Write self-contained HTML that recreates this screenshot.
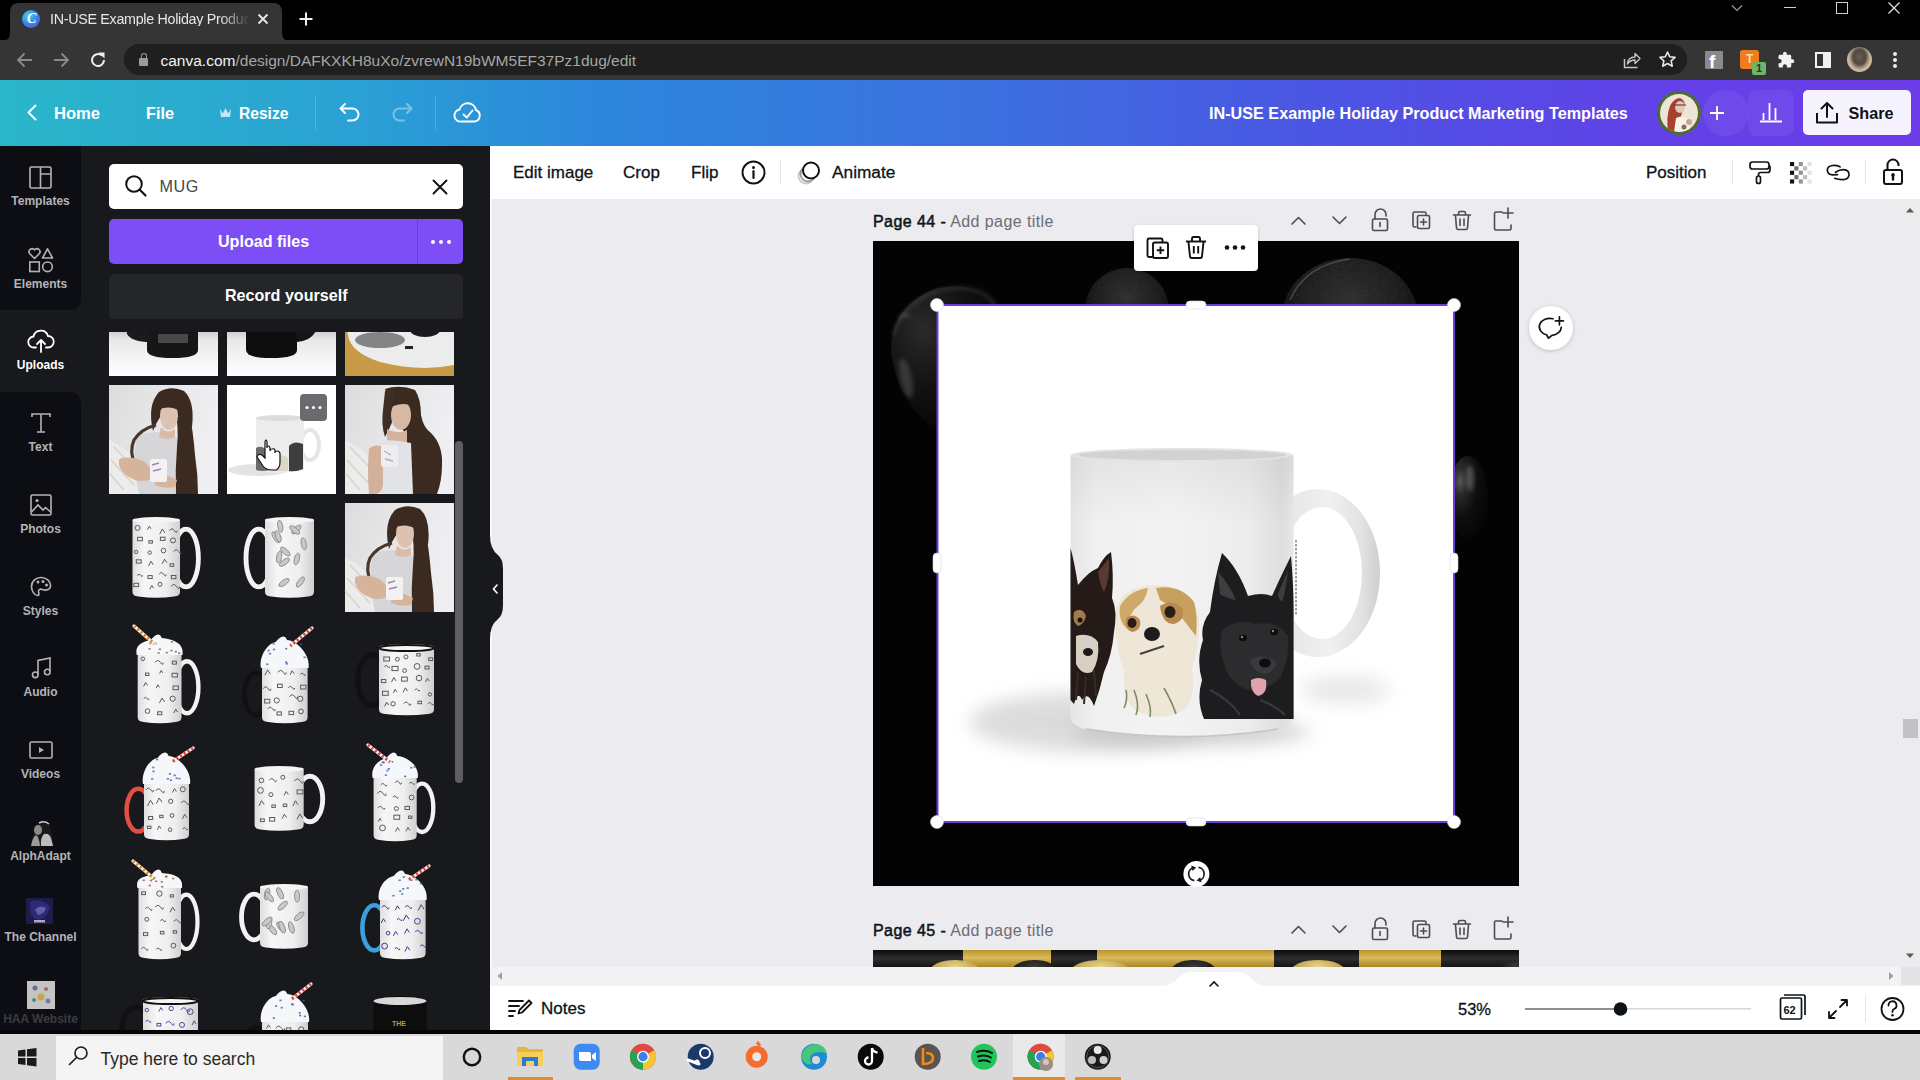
<!DOCTYPE html>
<html><head><meta charset="utf-8">
<style>
*{margin:0;padding:0;box-sizing:border-box}
html,body{width:1920px;height:1080px;overflow:hidden;background:#000;font-family:"Liberation Sans",sans-serif}
.a{position:absolute}
svg{position:absolute;overflow:visible}
.t{position:absolute;white-space:nowrap;line-height:1}
</style></head><body>
<!-- ============ CHROME ============ -->
<div class="a" style="left:0;top:0;width:1920px;height:40px;background:#000"></div>
<svg style="left:0;top:0" width="300" height="41" viewBox="0 0 300 41"><path d="M2 41Q10 41 10 33V12Q10 3 19 3H273Q282 3 282 12V33Q282 41 290 41Z" fill="#353535"/></svg>
<div class="a" style="left:0;top:40px;width:1920px;height:40px;background:#353535"></div>
<div class="a" style="left:124px;top:44px;width:1563px;height:31px;background:#1f1f1f;border-radius:16px"></div>


<!-- tab content -->
<div class="a" style="left:22px;top:10px;width:18px;height:18px;border-radius:50%;background:radial-gradient(circle at 35% 30%,#3fd0e6 0%,#3b7fe6 55%,#6c3ce9 100%)"></div>
<div class="t" style="left:27px;top:12px;font-size:14px;color:#fff;font-family:'Liberation Serif',serif;font-style:italic;font-weight:700">C</div>
<div class="t" style="left:50px;top:11.5px;font-size:14.3px;letter-spacing:-0.3px;color:#e6e6e6;width:200px;overflow:hidden;-webkit-mask-image:linear-gradient(90deg,#000 85%,transparent 100%)">IN-USE Example Holiday Product Marketing</div>
<svg style="left:257px;top:13px" width="12" height="12" viewBox="0 0 12 12"><path d="M1.5 1.5L10.5 10.5M10.5 1.5L1.5 10.5" stroke="#e8e8e8" stroke-width="1.8"/></svg>
<svg style="left:299px;top:12px" width="14" height="14" viewBox="0 0 14 14"><path d="M7 0.5V13.5M0.5 7H13.5" stroke="#f0f0f0" stroke-width="2"/></svg>
<!-- window controls -->
<svg style="left:1731px;top:4px" width="12" height="8" viewBox="0 0 12 8"><path d="M1 1.5L6 6.5L11 1.5" stroke="#9a9a9a" stroke-width="1.2" fill="none"/></svg>
<div class="a" style="left:1784px;top:7px;width:12px;height:1px;background:#cfcfcf"></div>
<div class="a" style="left:1836px;top:2px;width:12px;height:12px;border:1.2px solid #cfcfcf"></div>
<svg style="left:1888px;top:2px" width="12" height="12" viewBox="0 0 12 12"><path d="M0.5 0.5L11.5 11.5M11.5 0.5L0.5 11.5" stroke="#dcdcdc" stroke-width="1.3"/></svg>
<!-- nav -->
<svg style="left:16px;top:52px" width="17" height="16" viewBox="0 0 17 16"><path d="M16 8H2M8.5 1.5L2 8L8.5 14.5" stroke="#8a8a8a" stroke-width="1.8" fill="none"/></svg>
<svg style="left:53px;top:52px" width="17" height="16" viewBox="0 0 17 16"><path d="M1 8H15M8.5 1.5L15 8L8.5 14.5" stroke="#8a8a8a" stroke-width="1.8" fill="none"/></svg>
<svg style="left:89px;top:51px" width="18" height="18" viewBox="0 0 18 18"><path d="M15 9A6 6 0 1 1 12.8 4.4" stroke="#efefef" stroke-width="2" fill="none"/><path d="M9.5 1.5H15.5V7.5Z" fill="#efefef"/></svg>
<div class="a" style="left:139px;top:58px;width:9px;height:8px;background:#9a9a9a;border-radius:1px"></div>
<div class="a" style="left:140.5px;top:53px;width:6px;height:7px;border:1.6px solid #9a9a9a;border-bottom:none;border-radius:3px 3px 0 0"></div>
<div class="t" style="left:160.5px;top:53px;font-size:15.5px;color:#f2f2f2">canva.com<span style="color:#a6a6a6">/design/DAFKXKH8uXo/zvrewN19bWM5EF37Pz1dug/edit</span></div>
<!-- right toolbar icons -->
<svg style="left:1623px;top:51px" width="18" height="18" viewBox="0 0 18 18"><path d="M1.5 8V16.5H14.5" stroke="#c4c4c4" stroke-width="1.5" fill="none"/><path d="M4.5 13C5 8 8.5 6 12 6V2.5L17 7.5L12 12.5V9C9 9 6.5 10 4.5 13Z" stroke="#c4c4c4" stroke-width="1.4" fill="none" stroke-linejoin="round"/></svg>
<svg style="left:1658px;top:50px" width="19" height="19" viewBox="0 0 24 24"><path d="M12 2.5L14.9 8.6L21.5 9.3L16.6 13.8L18 20.5L12 17.1L6 20.5L7.4 13.8L2.5 9.3L9.1 8.6Z" stroke="#e6e6e6" stroke-width="2" fill="none" stroke-linejoin="round"/></svg>
<div class="a" style="left:1705px;top:51px;width:18px;height:18px;background:#8a8a8a;border-radius:1px"></div>
<div class="t" style="left:1709px;top:52px;font-size:19px;font-weight:700;color:#fff">f</div>
<div class="a" style="left:1740px;top:50px;width:19px;height:19px;background:#f07c1c;border-radius:3px"></div>
<div class="t" style="left:1746px;top:53px;font-size:12px;font-weight:700;color:#ffd9a8">T</div>
<div class="a" style="left:1752px;top:62px;width:14px;height:13px;background:#6fb46a;border-radius:2px"></div>
<div class="t" style="left:1756px;top:63px;font-size:11px;font-weight:700;color:#1f3f1c">1</div>
<svg style="left:1777px;top:51px" width="18" height="18" viewBox="0 0 24 24"><path d="M20.5 11H19V7c0-1.1-.9-2-2-2h-4V3.5a2.5 2.5 0 0 0-5 0V5H4c-1.1 0-2 .9-2 2v3.8h1.5c1.5 0 2.7 1.2 2.7 2.7S5 16.2 3.5 16.2H2V20c0 1.1.9 2 2 2h3.8v-1.5c0-1.5 1.2-2.7 2.7-2.7s2.7 1.2 2.7 2.7V22H17c1.1 0 2-.9 2-2v-4h1.5a2.5 2.5 0 0 0 0-5z" fill="#f2f2f2"/></svg>
<div class="a" style="left:1815px;top:52px;width:16px;height:16px;border:2px solid #f2f2f2;border-right-width:8px"></div>
<div class="a" style="left:1847px;top:47px;width:25px;height:25px;border-radius:50%;background:radial-gradient(ellipse at 50% 40%,#6a5d55 0%,#514841 35%,#c9b49a 60%,#d9c8b2 100%)"></div>
<div class="a" style="left:1893px;top:52px;width:4px;height:4px;border-radius:50%;background:#eee;box-shadow:0 6px 0 #eee,0 12px 0 #eee"></div>

<!-- ============ CANVA HEADER ============ -->
<div class="a" style="left:0;top:80px;width:1920px;height:66px;background:linear-gradient(90deg,#2bb6c9 0%,#2aa2d4 18%,#2c87dc 31%,#3b72df 50%,#4a56e3 68%,#6141e8 86%,#6e3ce9 100%)"></div>


<svg style="left:26px;top:104px" width="12" height="17" viewBox="0 0 12 17"><path d="M9.5 1.5L2.5 8.5L9.5 15.5" stroke="#fff" stroke-width="2" fill="none" stroke-linecap="round" stroke-linejoin="round"/></svg>
<div class="t" style="left:54px;top:105.5px;font-size:16.6px;font-weight:700;color:#fff">Home</div>
<div class="t" style="left:146px;top:105px;font-size:16.2px;font-weight:700;color:#fff">File</div>
<svg style="left:219px;top:107px" width="13" height="12" viewBox="0 0 13 12"><path d="M1 2L3.8 6.5L6.5 1L9.2 6.5L12 2L11 10H2Z" fill="#e4f0ff" opacity="0.85"/></svg>
<div class="t" style="left:239px;top:105.5px;font-size:15.6px;font-weight:700;color:#fff">Resize</div>
<div class="a" style="left:315px;top:96px;width:1px;height:34px;background:rgba(255,255,255,0.18)"></div>
<svg style="left:338px;top:102px" width="24" height="20" viewBox="0 0 24 20"><path d="M7 2L2.5 6.5L7 11" stroke="#fff" stroke-width="1.9" fill="none" stroke-linecap="round" stroke-linejoin="round"/><path d="M3 6.5H14.5A6 6 0 0 1 14.5 18.5H10" stroke="#fff" stroke-width="1.9" fill="none" stroke-linecap="round"/></svg>
<svg style="left:390px;top:102px" width="24" height="20" viewBox="0 0 24 20" opacity="0.38"><path d="M17 2L21.5 6.5L17 11" stroke="#fff" stroke-width="1.9" fill="none" stroke-linecap="round" stroke-linejoin="round"/><path d="M21 6.5H9.5A6 6 0 0 0 9.5 18.5H14" stroke="#fff" stroke-width="1.9" fill="none" stroke-linecap="round"/></svg>
<div class="a" style="left:435px;top:96px;width:1px;height:34px;background:rgba(255,255,255,0.18)"></div>
<svg style="left:454px;top:101px" width="28" height="22" viewBox="0 0 28 22"><path d="M7.5 20.5H20.5A6 6 0 0 0 22 9A8.5 8.5 0 0 0 5.5 8.5A6 6 0 0 0 7.5 20.5Z" stroke="#fff" stroke-width="1.9" fill="none" stroke-linejoin="round"/><path d="M9.5 13.5L12.8 16.5L18.5 9.5" stroke="#fff" stroke-width="1.9" fill="none" stroke-linecap="round" stroke-linejoin="round"/></svg>
<div class="t" style="left:1209px;top:105px;font-size:16.2px;font-weight:700;color:#fff">IN-USE Example Holiday Product Marketing Templates</div>
<div class="a" style="left:1657px;top:91px;width:44px;height:44px;border-radius:50%;background:#4c6b2e"></div>
<svg style="left:1660px;top:94px" width="38" height="38" viewBox="0 0 38 38"><defs><clipPath id="avc"><circle cx="19" cy="19" r="19"/></clipPath></defs><g clip-path="url(#avc)"><rect width="38" height="38" fill="#ece4d6"/><path d="M8 38Q6 22 10 12Q14 4 20 4Q26 6 24 14Q20 22 18 38Z" fill="#a8402e"/><ellipse cx="20" cy="13" rx="5" ry="6" fill="#e2c8b4"/><path d="M14 11H26" stroke="#333" stroke-width="1.2"/><path d="M16 24Q22 20 30 26V38H14Z" fill="#f6f2ea"/><circle cx="29" cy="28" r="3" fill="#c9a890"/><circle cx="24" cy="33" r="2.5" fill="#8a6a5a"/></g></svg>
<div class="a" style="left:1703px;top:90px;width:46px;height:46px;border-radius:50%;background:rgba(255,255,255,0.06)"></div>
<svg style="left:1709px;top:105px" width="16" height="16" viewBox="0 0 16 16"><path d="M8 1V15M1 8H15" stroke="#fff" stroke-width="1.8"/></svg>
<div class="a" style="left:1748px;top:90px;width:46px;height:46px;border-radius:8px;background:rgba(255,255,255,0.06)"></div>
<svg style="left:1759px;top:101px" width="24" height="22" viewBox="0 0 24 22"><path d="M1 20.5H23M4.5 19V12M10.5 19V2M16.5 19V7" stroke="#fff" stroke-width="1.8" fill="none"/></svg>
<div class="a" style="left:1803px;top:90px;width:108px;height:45px;border-radius:5px;background:#f6f3fe"></div>
<svg style="left:1815px;top:101px" width="24" height="24" viewBox="0 0 24 24"><path d="M2 12V21.5H22V12" stroke="#0e1318" stroke-width="2" fill="none" stroke-linejoin="round"/><path d="M12 16V2.5M6.5 7.5L12 2L17.5 7.5" stroke="#0e1318" stroke-width="2" fill="none" stroke-linecap="round" stroke-linejoin="round"/></svg>
<div class="t" style="left:1848.5px;top:105px;font-size:16.2px;font-weight:700;color:#0e1318">Share</div>

<!-- ============ LEFT RAIL + PANEL ============ -->
<div class="a" style="left:0;top:146px;width:490px;height:884px;background:#18191d"></div>
<div class="a" style="left:0;top:146px;width:81px;height:164px;background:#0d0e13;border-radius:0 0 10px 0"></div>
<div class="a" style="left:0;top:392px;width:81px;height:638px;background:#0d0e13;border-radius:0 10px 0 0"></div>
<style>.rl{position:absolute;left:0;width:81px;text-align:center;font-size:12px;font-weight:700;color:#b4b4b8;line-height:1;white-space:nowrap}</style>
<svg style="left:29px;top:166px" width="23" height="23" viewBox="0 0 23 23"><rect x="1" y="1" width="21" height="21" rx="1.5" stroke="#b4b4b8" stroke-width="1.6" fill="none"/><path d="M11.5 1V22M11.5 8H22" stroke="#b4b4b8" stroke-width="1.6"/></svg>
<div class="rl" style="top:195px">Templates</div>
<svg style="left:28px;top:247px" width="26" height="26" viewBox="0 0 26 26"><path d="M6.5 11.5L1.8 6.8A2.8 2.8 0 0 1 6.5 2.8A2.8 2.8 0 0 1 11.2 6.8Z" stroke="#b4b4b8" stroke-width="1.6" fill="none" stroke-linejoin="round"/><path d="M19.5 1.8L24.5 11H14.5Z" stroke="#b4b4b8" stroke-width="1.6" fill="none" stroke-linejoin="round"/><rect x="1.8" y="15" width="9.5" height="9.5" stroke="#b4b4b8" stroke-width="1.6" fill="none"/><circle cx="19.5" cy="19.8" r="4.8" stroke="#b4b4b8" stroke-width="1.6" fill="none"/></svg>
<div class="rl" style="top:278px">Elements</div>
<svg style="left:27px;top:329px" width="28" height="24" viewBox="0 0 28 24"><path d="M9 18.5H7A5.5 5.5 0 0 1 6.5 7.5A7.5 7.5 0 0 1 21 7A5.5 5.5 0 0 1 21 18.5H19" stroke="#fff" stroke-width="1.8" fill="none" stroke-linecap="round"/><path d="M14 23V11.5M10 15L14 11L18 15" stroke="#fff" stroke-width="1.8" fill="none" stroke-linecap="round" stroke-linejoin="round"/></svg>
<div class="rl" style="top:359px;color:#fff">Uploads</div>
<svg style="left:31px;top:413px" width="20" height="20" viewBox="0 0 20 20"><path d="M1 4V1H19V4M10 1V19M6 19H14" stroke="#b4b4b8" stroke-width="1.6" fill="none"/></svg>
<div class="rl" style="top:441px">Text</div>
<svg style="left:30px;top:494px" width="22" height="22" viewBox="0 0 22 22"><rect x="1" y="1" width="20" height="20" rx="1.5" stroke="#b4b4b8" stroke-width="1.6" fill="none"/><circle cx="7" cy="6.5" r="1.6" fill="#b4b4b8"/><path d="M1.5 18L8 11L13 16L15.5 13.5L20.5 18" stroke="#b4b4b8" stroke-width="1.6" fill="none"/></svg>
<div class="rl" style="top:523px">Photos</div>
<svg style="left:30px;top:576px" width="22" height="21" viewBox="0 0 22 21"><path d="M11 1.5C5.5 1.5 1.5 5.5 1.5 10.5C1.5 15.5 5 19.5 7.5 19.5C9.5 19.5 9 17.5 8.5 16C8 14 10 12.5 12.5 13.5C16.5 15 20.5 13.5 20.5 9.5C20.5 5 16.5 1.5 11 1.5Z" stroke="#b4b4b8" stroke-width="1.6" fill="none"/><circle cx="8" cy="6" r="1.5" fill="#b4b4b8"/><circle cx="13" cy="5.5" r="1.5" fill="#b4b4b8"/><circle cx="16.5" cy="9" r="1.5" fill="#b4b4b8"/></svg>
<div class="rl" style="top:605px">Styles</div>
<svg style="left:31px;top:657px" width="21" height="22" viewBox="0 0 21 22"><path d="M7 17.5V3.5L19 1V14.5" stroke="#b4b4b8" stroke-width="1.6" fill="none"/><circle cx="4.3" cy="17.8" r="2.8" stroke="#b4b4b8" stroke-width="1.6" fill="none"/><circle cx="16.3" cy="15" r="2.8" stroke="#b4b4b8" stroke-width="1.6" fill="none"/></svg>
<div class="rl" style="top:686px">Audio</div>
<svg style="left:29px;top:741px" width="24" height="18" viewBox="0 0 24 18"><rect x="1" y="1" width="22" height="16" rx="1.5" stroke="#b4b4b8" stroke-width="1.6" fill="none"/><path d="M10 6V12L15 9Z" fill="#b4b4b8"/></svg>
<div class="rl" style="top:768px">Videos</div>
<svg style="left:27px;top:820px" width="28" height="26" viewBox="0 0 28 26"><path d="M6 26Q4 16 8 10Q10 3 16 2Q23 2 24 9Q26 16 27 26Z" fill="#1a1a1a"/><path d="M14 26Q13 18 17 14Q22 13 24 18L26 26Z" fill="#bdbdbd"/><path d="M4 26Q5 18 9 15Q12 16 13 26Z" fill="#9a9a9a"/><ellipse cx="11" cy="10" rx="4" ry="5" fill="#8a8a8a"/><path d="M12 3Q18 0 22 4" stroke="#cfcfcf" stroke-width="1.5" fill="none"/></svg>
<div class="rl" style="top:850px">AlphAdapt</div>
<svg style="left:26px;top:898px" width="27" height="28" viewBox="0 0 27 28"><path d="M0 0H27V26H0Z" fill="#1e1c48"/><path d="M4 4Q14 -1 24 8Q22 20 12 22Q3 20 4 4Z" fill="#2e2a7a"/><path d="M9 12Q14 6 20 10Q18 16 12 17Z" fill="#7a76b0" opacity="0.7"/><rect x="8" y="22" width="11" height="2.5" fill="#a9a9c0"/></svg>
<div class="rl" style="top:931px">The Channel</div>
<svg style="left:27px;top:981px" width="28" height="28" viewBox="0 0 28 28"><rect width="28" height="28" fill="#c4c4c2"/><circle cx="8" cy="7" r="2.5" fill="#6a6aa0"/><circle cx="19" cy="8" r="2" fill="#a06a6a"/><circle cx="14" cy="16" r="3.5" fill="#c9a64a"/><circle cx="7" cy="19" r="2" fill="#5a8a6a"/><circle cx="21" cy="20" r="2.5" fill="#7a7ab0"/></svg>
<div class="rl" style="top:1013px;color:#3c3c40">HAA Website</div>


<!-- panel -->
<div class="a" style="left:109px;top:164px;width:354px;height:45px;background:#fff;border-radius:5px"></div>
<svg style="left:124px;top:174px" width="24" height="24" viewBox="0 0 24 24"><circle cx="10" cy="10" r="7.8" stroke="#0e1318" stroke-width="2" fill="none"/><path d="M15.8 15.8L21.5 21.5" stroke="#0e1318" stroke-width="2.2" stroke-linecap="round"/></svg>
<div class="t" style="left:159.5px;top:178px;font-size:16.2px;color:#45474d;letter-spacing:0.5px">MUG</div>
<svg style="left:432px;top:179px" width="16" height="16" viewBox="0 0 16 16"><path d="M1.5 1.5L14.5 14.5M14.5 1.5L1.5 14.5" stroke="#0e1318" stroke-width="1.9" stroke-linecap="round"/></svg>
<div class="a" style="left:109px;top:219px;width:354px;height:45px;background:#7d4ef6;border-radius:5px"></div>
<div class="a" style="left:417px;top:219px;width:1px;height:45px;background:#6a3fd6"></div>
<div class="t" style="left:218px;top:233px;font-size:16.1px;font-weight:700;color:#fff">Upload files</div>
<div class="a" style="left:431px;top:240px;width:4px;height:4px;border-radius:50%;background:#fff;box-shadow:8px 0 0 #fff,16px 0 0 #fff"></div>
<div class="a" style="left:109px;top:274px;width:354px;height:45px;background:#252629;border-radius:5px"></div>
<div class="t" style="left:225px;top:287px;font-size:16.1px;font-weight:700;color:#fff">Record yourself</div>

<!--PANEL_START-->
<svg style="left:0;top:0" width="490" height="1030" viewBox="0 0 490 1030">
<defs><clipPath id="pclip"><rect x="100" y="332" width="370" height="698"/></clipPath><linearGradient id="wbg" x1="0" y1="0" x2="0" y2="1"><stop offset="0" stop-color="#a9a9a9"/><stop offset="0.35" stop-color="#e8e8e8"/><stop offset="1" stop-color="#ffffff"/></linearGradient><linearGradient id="pbg" x1="0" y1="0" x2="1" y2="0.3"><stop offset="0" stop-color="#dcdcdc"/><stop offset="0.45" stop-color="#e6e6e8"/><stop offset="1" stop-color="#efeff1"/></linearGradient><linearGradient id="hair" x1="0" y1="0" x2="0" y2="1"><stop offset="0" stop-color="#2a1a12"/><stop offset="1" stop-color="#4a3022"/></linearGradient></defs>
<g clip-path="url(#pclip)">
<rect x="109" y="320" width="109" height="56" fill="url(#wbg)"/>
<path d="M147 320H198V350Q198 358 172.5 358Q147 358 147 350Z" fill="#161616"/><path d="M126 320H150V342Q132 342 127 334Z" fill="#1a1a1a"/><rect x="158" y="334" width="30" height="9" fill="#6a6a6a" opacity="0.6"/>
<rect x="227" y="320" width="109" height="56" fill="url(#wbg)"/>
<path d="M246 320H297V350Q297 358 271.5 358Q246 358 246 350Z" fill="#0e0e0e"/><path d="M295 320H318Q318 340 297 342Z" fill="#151515"/>
<rect x="345" y="320" width="109" height="56" fill="#c89a45"/>
<path d="M345 320H454V365Q420 372 380 362Q350 352 348 335Z" fill="#ececec"/>
<ellipse cx="380" cy="340" rx="25" ry="8" fill="#6a6a6a" opacity="0.8"/><ellipse cx="425" cy="330" rx="15" ry="7" fill="#1a1a1a"/><rect x="405" y="346" width="8" height="3" fill="#222"/>
<g transform="translate(109 385)">
<rect x="0" y="0" width="109" height="109" fill="url(#pbg)"/>
<path d="M0 55Q15 60 30 80L40 109H0Z" fill="#ececea" opacity="0.9"/><path d="M2 75L25 100M0 88L15 105M5 62L32 90" stroke="#c9c9c6" stroke-width="1.5" opacity="0.7"/>
<path d="M28 50Q45 45 62 48Q70 52 70 62V109H30Q22 80 28 50Z" fill="#d6d6d9"/>
<path d="M52 42Q58 50 66 44L66 52Q58 56 50 52Z" fill="#d9bba6"/>
<path d="M44 46Q38 20 50 7Q62 0 75 6Q86 16 83 42Q70 30 60 24Q50 30 44 46Z" fill="#3b2a20"/>
<path d="M62 18Q74 14 80 26Q84 45 86 70Q89 90 89 109H67Q66 85 68 62Q70 40 66 26Z" fill="#3b2a20"/>
<ellipse cx="60" cy="31" rx="9" ry="14" fill="#dcc2b0"/>
<path d="M50 22Q58 12 68 16Q72 20 71 26Q62 20 50 24Z" fill="#3b2a20"/>
<path d="M47 40Q32 44 25 55Q20 66 26 80" stroke="#4a382c" stroke-width="3.2" fill="none"/>
<path d="M10 74Q22 70 36 77L46 88Q44 97 30 96Q14 92 10 80Z" fill="#d6b49c"/>
<path d="M46 92Q56 88 68 95L66 102Q55 104 46 100Z" fill="#d6b49c"/>
<rect x="41" y="74" width="17" height="23" rx="2" fill="#f2f2f5"/><path d="M43 80L50 78M44 86L52 84" stroke="#9a8aa8" stroke-width="1.5"/>
</g>
<rect x="227" y="385" width="109" height="109" fill="#ffffff"/>
<ellipse cx="258" cy="470" rx="30" ry="6" fill="#d0d0d0" opacity="0.6"/>
<ellipse cx="310" cy="445" rx="9" ry="15" fill="none" stroke="#e6e6e6" stroke-width="4"/>
<path d="M256 418Q280 414 304 418V470Q280 476 256 470Z" fill="#ececec"/>
<ellipse cx="280" cy="418" rx="24" ry="3" fill="#dcdcdc"/>
<path d="M256 448Q262 444 268 452L270 470Q262 472 256 470Z" fill="#6a6a6a"/><path d="M289 446Q294 440 303 444V469Q296 472 289 471Z" fill="#3e3e40"/><path d="M270 456Q278 452 288 458V471L270 471Z" fill="#ddd6c8"/>
<rect x="300" y="394" width="27" height="27" rx="4" fill="#6b6b6f"/>
<circle cx="307" cy="407.5" r="1.6" fill="#fff"/><circle cx="313.5" cy="407.5" r="1.6" fill="#fff"/><circle cx="320" cy="407.5" r="1.6" fill="#fff"/>
<path d="M265 443V458L262 455Q258 453 257 457L263 466Q266 470 272 470H276Q280 468 280 462V454Q280 451 277 451Q275 451 275 453V451Q275 448 272 449Q270 449 270 451V449Q270 446 268 446Q267 446 267 448V443Q267 440 266 440Q265 440 265 443Z" fill="#fff" stroke="#111" stroke-width="1.2"/>
<g transform="translate(345 385)">
<rect x="0" y="0" width="109" height="109" fill="url(#pbg)"/>
<path d="M0 55Q15 60 30 80L40 109H0Z" fill="#ececea" opacity="0.9"/><path d="M2 75L25 100M0 88L15 105M5 62L32 90" stroke="#c9c9c6" stroke-width="1.5" opacity="0.7"/>
<path d="M40 4Q55 -1 70 5Q76 14 76 30Q78 42 86 48Q98 60 97 80Q97 96 92 109H62Q62 80 62 60Q60 45 55 40Z" fill="#3b2a20"/>
<path d="M40 6Q44 3 50 3L48 35Q44 45 40 52Q36 40 38 25Z" fill="#3f2e23"/>
<path d="M42 44Q52 50 62 45L62 58H42Z" fill="#d4b29c"/>
<path d="M34 56Q48 54 66 58L68 109H36Q32 80 34 56Z" fill="#e2e3e6"/>
<ellipse cx="56" cy="30" rx="10" ry="15" fill="#d6b8a4"/>
<path d="M46 20Q52 8 62 10Q68 14 68 22Q60 16 46 22Z" fill="#3b2a20"/>
<path d="M24 64Q30 58 38 62L38 100Q36 109 30 109H24Q22 85 24 64Z" fill="#d3b09a"/>
<rect x="36" y="60" width="17" height="22" rx="2" fill="#eeeef2"/><path d="M39 66L46 70M40 74L48 76" stroke="#b0b0c0" stroke-width="1.4"/>
</g>
<ellipse cx="186.0" cy="558.0" rx="12.4" ry="28.9" fill="none" stroke="#f2f2f2" stroke-width="4.8"/>
<linearGradient id="g46" x1="0" x2="1"><stop offset="0" stop-color="#dedede"/><stop offset="0.25" stop-color="#f6f6f6"/><stop offset="0.7" stop-color="#efefef"/><stop offset="1" stop-color="#cfcfcf"/></linearGradient>
<path d="M132.5 520H180V592Q180 596 174 596.5Q156.25 599 138.5 596.5Q132.5 596 132.5 592Z" fill="url(#g46)"/>
<ellipse cx="156.25" cy="520" rx="23.75" ry="3" fill="#f4f4f4"/>
<circle cx="137.6" cy="527.9" r="2.5" fill="none" stroke="#5a5a5a" stroke-width="1.0"/>
<rect x="137.6" y="537.3" width="4.8" height="3.4" fill="none" stroke="#5a5a5a" stroke-width="1.0"/>
<circle cx="136.1" cy="552.0" r="1.7" fill="none" stroke="#5a5a5a" stroke-width="1.0"/>
<rect x="136.3" y="559.8" width="4.8" height="3.3" fill="none" stroke="#5a5a5a" stroke-width="1.0"/>
<path d="M137.4 575.4Q139.1 572.9 140.8 575.4T142.5 575.4" fill="none" stroke="#5a5a5a" stroke-width="1.0"/>
<rect x="133.8" y="583.3" width="4.8" height="3.3" fill="none" stroke="#5a5a5a" stroke-width="1.0"/>
<path d="M147.5 529.7L149.3 526.1L151.0 528.8" fill="none" stroke="#5a5a5a" stroke-width="1.0"/>
<rect x="148.9" y="540.7" width="3.5" height="2.4" fill="none" stroke="#5a5a5a" stroke-width="1.0"/>
<circle cx="149.7" cy="552.6" r="1.7" fill="none" stroke="#5a5a5a" stroke-width="1.0"/>
<path d="M148.6 566.0L150.9 561.3L153.3 564.8" fill="none" stroke="#5a5a5a" stroke-width="1.0"/>
<rect x="148.0" y="575.6" width="4.2" height="2.9" fill="none" stroke="#5a5a5a" stroke-width="1.0"/>
<path d="M149.8 589.3L151.8 585.4L153.7 588.3" fill="none" stroke="#5a5a5a" stroke-width="1.0"/>
<path d="M159.7 534.2L162.3 528.9L164.9 532.9" fill="none" stroke="#5a5a5a" stroke-width="1.0"/>
<rect x="160.4" y="537.2" width="4.6" height="3.2" fill="none" stroke="#5a5a5a" stroke-width="1.0"/>
<circle cx="163.5" cy="550.6" r="2.3" fill="none" stroke="#5a5a5a" stroke-width="1.0"/>
<path d="M162.1 563.9L164.5 559.2L166.9 562.7" fill="none" stroke="#5a5a5a" stroke-width="1.0"/>
<path d="M159.1 574.3Q161.4 570.8 163.7 574.3T166.0 574.3" fill="none" stroke="#5a5a5a" stroke-width="1.0"/>
<circle cx="160.0" cy="584.3" r="2.0" fill="none" stroke="#5a5a5a" stroke-width="1.0"/>
<path d="M169.4 530.7Q171.9 526.9 174.4 530.7T176.9 530.7" fill="none" stroke="#5a5a5a" stroke-width="1.0"/>
<circle cx="173.0" cy="540.4" r="2.5" fill="none" stroke="#5a5a5a" stroke-width="1.0"/>
<path d="M173.8 551.6Q176.3 547.9 178.7 551.6T181.2 551.6" fill="none" stroke="#5a5a5a" stroke-width="1.0"/>
<rect x="170.1" y="563.8" width="3.6" height="2.5" fill="none" stroke="#5a5a5a" stroke-width="1.0"/>
<rect x="171.3" y="575.5" width="4.6" height="3.2" fill="none" stroke="#5a5a5a" stroke-width="1.0"/>
<path d="M171.0 586.6Q173.8 582.3 176.6 586.6T179.5 586.6" fill="none" stroke="#5a5a5a" stroke-width="1.0"/>
<ellipse cx="258.8" cy="558.0" rx="12.8" ry="28.9" fill="none" stroke="#f2f2f2" stroke-width="4.9"/>
<linearGradient id="g74" x1="0" x2="1"><stop offset="0" stop-color="#dedede"/><stop offset="0.25" stop-color="#f6f6f6"/><stop offset="0.7" stop-color="#efefef"/><stop offset="1" stop-color="#cfcfcf"/></linearGradient>
<path d="M265 520H314V592Q314 596 308 596.5Q289.5 599 271 596.5Q265 596 265 592Z" fill="url(#g74)"/>
<ellipse cx="289.5" cy="520" rx="24.5" ry="3" fill="#f4f4f4"/>
<ellipse cx="303.7" cy="543.8" rx="2.5" ry="6" fill="#c8c8c8" stroke="#8a8a8a" stroke-width="0.9" transform="rotate(-10 303.7 543.8)"/>
<ellipse cx="284.0" cy="582.6" rx="2.5" ry="6" fill="#c8c8c8" stroke="#8a8a8a" stroke-width="0.9" transform="rotate(55 284.0 582.6)"/>
<ellipse cx="275.9" cy="537.3" rx="2.5" ry="6" fill="#c8c8c8" stroke="#8a8a8a" stroke-width="0.9" transform="rotate(-32 275.9 537.3)"/>
<ellipse cx="279.1" cy="557.0" rx="2.5" ry="6" fill="#c8c8c8" stroke="#8a8a8a" stroke-width="0.9" transform="rotate(11 279.1 557.0)"/>
<ellipse cx="280.2" cy="526.3" rx="2.5" ry="6" fill="#c8c8c8" stroke="#8a8a8a" stroke-width="0.9" transform="rotate(-10 280.2 526.3)"/>
<ellipse cx="284.4" cy="562.2" rx="2.5" ry="6" fill="#c8c8c8" stroke="#8a8a8a" stroke-width="0.9" transform="rotate(54 284.4 562.2)"/>
<ellipse cx="296.9" cy="559.0" rx="2.5" ry="6" fill="#c8c8c8" stroke="#8a8a8a" stroke-width="0.9" transform="rotate(14 296.9 559.0)"/>
<ellipse cx="296.4" cy="529.5" rx="2.5" ry="6" fill="#c8c8c8" stroke="#8a8a8a" stroke-width="0.9" transform="rotate(48 296.4 529.5)"/>
<ellipse cx="300.4" cy="582.0" rx="2.5" ry="6" fill="#c8c8c8" stroke="#8a8a8a" stroke-width="0.9" transform="rotate(36 300.4 582.0)"/>
<ellipse cx="285.3" cy="551.5" rx="2.5" ry="6" fill="#c8c8c8" stroke="#8a8a8a" stroke-width="0.9" transform="rotate(-48 285.3 551.5)"/>
<ellipse cx="294.7" cy="530.0" rx="2.5" ry="6" fill="#c8c8c8" stroke="#8a8a8a" stroke-width="0.9" transform="rotate(-52 294.7 530.0)"/>
<ellipse cx="278.1" cy="536.4" rx="2.5" ry="6" fill="#c8c8c8" stroke="#8a8a8a" stroke-width="0.9" transform="rotate(-19 278.1 536.4)"/>
<g transform="translate(345 503)">
<rect x="0" y="0" width="109" height="109" fill="url(#pbg)"/>
<path d="M0 55Q15 60 30 80L40 109H0Z" fill="#ececea" opacity="0.9"/><path d="M2 75L25 100M0 88L15 105M5 62L32 90" stroke="#c9c9c6" stroke-width="1.5" opacity="0.7"/>
<path d="M28 50Q45 45 62 48Q70 52 70 62V109H30Q22 80 28 50Z" fill="#d6d6d9"/>
<path d="M52 42Q58 50 66 44L66 52Q58 56 50 52Z" fill="#d9bba6"/>
<path d="M44 46Q38 20 50 7Q62 0 75 6Q86 16 83 42Q70 30 60 24Q50 30 44 46Z" fill="#3b2a20"/>
<path d="M62 18Q74 14 80 26Q84 45 86 70Q89 90 89 109H67Q66 85 68 62Q70 40 66 26Z" fill="#3b2a20"/>
<ellipse cx="60" cy="31" rx="9" ry="14" fill="#dcc2b0"/>
<path d="M50 22Q58 12 68 16Q72 20 71 26Q62 20 50 24Z" fill="#3b2a20"/>
<path d="M47 40Q32 44 25 55Q20 66 26 80" stroke="#4a382c" stroke-width="3.2" fill="none"/>
<path d="M10 74Q22 70 36 77L46 88Q44 97 30 96Q14 92 10 80Z" fill="#d6b49c"/>
<path d="M46 92Q56 88 68 95L66 102Q55 104 46 100Z" fill="#d6b49c"/>
<rect x="41" y="74" width="17" height="23" rx="2" fill="#f2f2f5"/><path d="M43 80L50 78M44 86L52 84" stroke="#9a8aa8" stroke-width="1.5"/>
</g>
<ellipse cx="187.0" cy="687.2" rx="11.4" ry="26.0" fill="none" stroke="#f2f2f2" stroke-width="4.4"/>
<linearGradient id="g104" x1="0" x2="1"><stop offset="0" stop-color="#dedede"/><stop offset="0.25" stop-color="#f6f6f6"/><stop offset="0.7" stop-color="#efefef"/><stop offset="1" stop-color="#cfcfcf"/></linearGradient>
<path d="M137.7 653H181.5V717.5Q181.5 721.5 175.5 722.0Q159.6 724.5 143.7 722.0Q137.7 721.5 137.7 717.5Z" fill="url(#g104)"/>
<circle cx="142.8" cy="658.8" r="1.8" fill="none" stroke="#5a5a5a" stroke-width="1.0"/>
<rect x="145.5" y="673.1" width="3.4" height="2.4" fill="none" stroke="#5a5a5a" stroke-width="1.0"/>
<path d="M143.6 686.4L145.6 682.5L147.5 685.5" fill="none" stroke="#5a5a5a" stroke-width="1.0"/>
<path d="M143.7 698.6Q145.5 696.0 147.3 698.6T149.0 698.6" fill="none" stroke="#5a5a5a" stroke-width="1.0"/>
<circle cx="147.5" cy="711.1" r="2.3" fill="none" stroke="#5a5a5a" stroke-width="1.0"/>
<path d="M155.2 662.5Q157.8 658.5 160.5 662.5T163.1 662.5" fill="none" stroke="#5a5a5a" stroke-width="1.0"/>
<path d="M159.6 673.7L161.2 670.4L162.9 672.9" fill="none" stroke="#5a5a5a" stroke-width="1.0"/>
<path d="M156.2 688.1L157.8 684.8L159.5 687.3" fill="none" stroke="#5a5a5a" stroke-width="1.0"/>
<path d="M159.4 703.1L162.0 698.0L164.6 701.9" fill="none" stroke="#5a5a5a" stroke-width="1.0"/>
<rect x="157.6" y="711.8" width="4.2" height="2.9" fill="none" stroke="#5a5a5a" stroke-width="1.0"/>
<rect x="172.3" y="661.2" width="4.1" height="2.9" fill="none" stroke="#5a5a5a" stroke-width="1.0"/>
<rect x="172.1" y="673.3" width="5.3" height="3.7" fill="none" stroke="#5a5a5a" stroke-width="1.0"/>
<rect x="173.1" y="686.0" width="5.3" height="3.7" fill="none" stroke="#5a5a5a" stroke-width="1.0"/>
<circle cx="172.7" cy="698.7" r="2.6" fill="none" stroke="#5a5a5a" stroke-width="1.0"/>
<path d="M173.8 713.0L175.7 709.2L177.5 712.0" fill="none" stroke="#5a5a5a" stroke-width="1.0"/>
<path d="M136.7 655C134.7 645 141.7 642 150.84 640C155.22 634 159.6 632 161.79 638C172.74 639 184.5 643 182.5 655Z" fill="#f6f7fa"/>
<rect x="157.6" y="652.2" width="2.2" height="1.6" fill="#9a5a2a" opacity="0.8"/>
<rect x="178.0" y="652.4" width="2.2" height="1.6" fill="#9a5a2a" opacity="0.8"/>
<rect x="154.5" y="642.9" width="2.2" height="1.6" fill="#9a5a2a" opacity="0.8"/>
<rect x="149.3" y="642.6" width="2.2" height="1.6" fill="#9a5a2a" opacity="0.8"/>
<rect x="148.4" y="648.1" width="2.2" height="1.6" fill="#9a5a2a" opacity="0.8"/>
<rect x="174.7" y="650.9" width="2.2" height="1.6" fill="#9a5a2a" opacity="0.8"/>
<rect x="158.8" y="648.5" width="2.2" height="1.6" fill="#9a5a2a" opacity="0.8"/>
<rect x="170.9" y="641.1" width="2.2" height="1.6" fill="#9a5a2a" opacity="0.8"/>
<rect x="165.7" y="651.8" width="2.2" height="1.6" fill="#9a5a2a" opacity="0.8"/>
<rect x="170.3" y="649.8" width="2.2" height="1.6" fill="#9a5a2a" opacity="0.8"/>
<line x1="134" y1="626" x2="154.3" y2="644.0" stroke="#f4f4f4" stroke-width="3.2" stroke-linecap="round"/>
<line x1="134" y1="626" x2="154.3" y2="644.0" stroke="#d88a2a" stroke-width="3.2" stroke-dasharray="2.2 2.2"/>
<ellipse cx="256.3" cy="693.8" rx="11.9" ry="21.1" fill="none" stroke="#111" stroke-width="4.6"/>
<linearGradient id="g135" x1="0" x2="1"><stop offset="0" stop-color="#dedede"/><stop offset="0.25" stop-color="#f6f6f6"/><stop offset="0.7" stop-color="#efefef"/><stop offset="1" stop-color="#cfcfcf"/></linearGradient>
<path d="M262 666H307.6V717.5Q307.6 721.5 301.6 722.0Q284.8 724.5 268 722.0Q262 721.5 262 717.5Z" fill="url(#g135)"/>
<path d="M264.9 675.3L267.6 669.9L270.3 673.9" fill="none" stroke="#5a5a5a" stroke-width="1.0"/>
<path d="M263.0 688.8Q265.6 684.9 268.2 688.8T270.9 688.8" fill="none" stroke="#5a5a5a" stroke-width="1.0"/>
<rect x="264.6" y="699.3" width="5.2" height="3.7" fill="none" stroke="#5a5a5a" stroke-width="1.0"/>
<path d="M267.7 709.0Q270.2 705.3 272.6 709.0T275.0 709.0" fill="none" stroke="#5a5a5a" stroke-width="1.0"/>
<path d="M277.9 672.4Q280.6 668.3 283.4 672.4T286.1 672.4" fill="none" stroke="#5a5a5a" stroke-width="1.0"/>
<rect x="277.5" y="684.2" width="4.7" height="3.3" fill="none" stroke="#5a5a5a" stroke-width="1.0"/>
<circle cx="276.7" cy="700.4" r="2.6" fill="none" stroke="#5a5a5a" stroke-width="1.0"/>
<rect x="277.0" y="711.9" width="4.4" height="3.1" fill="none" stroke="#5a5a5a" stroke-width="1.0"/>
<path d="M290.2 674.7L292.1 670.8L294.1 673.7" fill="none" stroke="#5a5a5a" stroke-width="1.0"/>
<path d="M288.4 687.9Q290.5 684.8 292.6 687.9T294.6 687.9" fill="none" stroke="#5a5a5a" stroke-width="1.0"/>
<path d="M289.5 696.7Q292.2 692.8 294.8 696.7T297.4 696.7" fill="none" stroke="#5a5a5a" stroke-width="1.0"/>
<rect x="289.0" y="711.3" width="4.6" height="3.3" fill="none" stroke="#5a5a5a" stroke-width="1.0"/>
<path d="M300.4 674.3Q302.1 671.9 303.7 674.3T305.3 674.3" fill="none" stroke="#5a5a5a" stroke-width="1.0"/>
<rect x="300.6" y="685.2" width="5.4" height="3.8" fill="none" stroke="#5a5a5a" stroke-width="1.0"/>
<circle cx="300.3" cy="698.8" r="2.6" fill="none" stroke="#5a5a5a" stroke-width="1.0"/>
<circle cx="301.0" cy="711.4" r="2.4" fill="none" stroke="#5a5a5a" stroke-width="1.0"/>
<path d="M261 668C259 658 266 644 275.68 642C280.24 636 284.8 634 287.08000000000004 640C298.48 641 310.6 656 308.6 668Z" fill="#f6f7fa"/>
<rect x="300.0" y="643.4" width="2.2" height="1.6" fill="#3b5bb0" opacity="0.8"/>
<rect x="272.6" y="643.0" width="2.2" height="1.6" fill="#3b5bb0" opacity="0.8"/>
<rect x="268.9" y="652.9" width="2.2" height="1.6" fill="#3b5bb0" opacity="0.8"/>
<rect x="266.1" y="663.5" width="2.2" height="1.6" fill="#3b5bb0" opacity="0.8"/>
<rect x="267.5" y="649.8" width="2.2" height="1.6" fill="#3b5bb0" opacity="0.8"/>
<rect x="303.5" y="656.5" width="2.2" height="1.6" fill="#3b5bb0" opacity="0.8"/>
<rect x="272.9" y="648.7" width="2.2" height="1.6" fill="#3b5bb0" opacity="0.8"/>
<rect x="285.1" y="661.4" width="2.2" height="1.6" fill="#3b5bb0" opacity="0.8"/>
<rect x="285.1" y="647.9" width="2.2" height="1.6" fill="#3b5bb0" opacity="0.8"/>
<rect x="285.7" y="663.0" width="2.2" height="1.6" fill="#3b5bb0" opacity="0.8"/>
<line x1="312" y1="628" x2="290.3" y2="646.0" stroke="#f4f4f4" stroke-width="3.2" stroke-linecap="round"/>
<line x1="312" y1="628" x2="290.3" y2="646.0" stroke="#e0463c" stroke-width="3.2" stroke-dasharray="2.2 2.2"/>
<ellipse cx="372.1" cy="680.2" rx="14.3" ry="25.2" fill="none" stroke="#111" stroke-width="5.5"/>
<linearGradient id="g167" x1="0" x2="1"><stop offset="0" stop-color="#dedede"/><stop offset="0.25" stop-color="#f6f6f6"/><stop offset="0.7" stop-color="#efefef"/><stop offset="1" stop-color="#cfcfcf"/></linearGradient>
<path d="M379 647H434V709.4Q434 713.4 428 713.9Q406.5 716.4 385 713.9Q379 713.4 379 709.4Z" fill="url(#g167)"/>
<ellipse cx="406.5" cy="647" rx="27.5" ry="3" fill="#f4f4f4"/>
<ellipse cx="406.5" cy="648" rx="27.5" ry="3" fill="#f5f5f5" stroke="#111" stroke-width="2"/>
<rect x="383.8" y="657.0" width="5.7" height="4.0" fill="none" stroke="#5a5a5a" stroke-width="1.0"/>
<path d="M384.4 666.7Q386.2 664.1 388.0 666.7T389.7 666.7" fill="none" stroke="#5a5a5a" stroke-width="1.0"/>
<rect x="381.4" y="679.5" width="4.4" height="3.1" fill="none" stroke="#5a5a5a" stroke-width="1.0"/>
<rect x="382.5" y="691.3" width="5.7" height="4.0" fill="none" stroke="#5a5a5a" stroke-width="1.0"/>
<path d="M384.6 706.4L386.7 702.2L388.8 705.3" fill="none" stroke="#5a5a5a" stroke-width="1.0"/>
<circle cx="397.4" cy="659.2" r="1.9" fill="none" stroke="#5a5a5a" stroke-width="1.0"/>
<rect x="392.0" y="666.4" width="6.0" height="4.2" fill="none" stroke="#5a5a5a" stroke-width="1.0"/>
<path d="M391.5 682.2L393.8 677.5L396.1 681.0" fill="none" stroke="#5a5a5a" stroke-width="1.0"/>
<path d="M393.4 692.9L395.1 689.4L396.8 692.0" fill="none" stroke="#5a5a5a" stroke-width="1.0"/>
<circle cx="393.1" cy="703.8" r="2.2" fill="none" stroke="#5a5a5a" stroke-width="1.0"/>
<circle cx="405.9" cy="656.9" r="2.0" fill="none" stroke="#5a5a5a" stroke-width="1.0"/>
<circle cx="404.6" cy="670.6" r="1.9" fill="none" stroke="#5a5a5a" stroke-width="1.0"/>
<rect x="401.6" y="677.1" width="5.7" height="4.0" fill="none" stroke="#5a5a5a" stroke-width="1.0"/>
<path d="M403.2 692.2L405.4 687.8L407.5 691.1" fill="none" stroke="#5a5a5a" stroke-width="1.0"/>
<path d="M403.7 703.7Q406.0 700.3 408.4 703.7T410.7 703.7" fill="none" stroke="#5a5a5a" stroke-width="1.0"/>
<rect x="416.8" y="653.6" width="3.4" height="2.4" fill="none" stroke="#5a5a5a" stroke-width="1.0"/>
<circle cx="417.1" cy="666.4" r="2.9" fill="none" stroke="#5a5a5a" stroke-width="1.0"/>
<circle cx="419.0" cy="678.1" r="2.8" fill="none" stroke="#5a5a5a" stroke-width="1.0"/>
<path d="M414.7 690.0Q416.3 687.6 417.9 690.0T419.6 690.0" fill="none" stroke="#5a5a5a" stroke-width="1.0"/>
<rect x="417.9" y="701.2" width="3.6" height="2.5" fill="none" stroke="#5a5a5a" stroke-width="1.0"/>
<rect x="428.7" y="657.8" width="3.9" height="2.8" fill="none" stroke="#5a5a5a" stroke-width="1.0"/>
<rect x="425.0" y="666.2" width="4.1" height="2.8" fill="none" stroke="#5a5a5a" stroke-width="1.0"/>
<path d="M425.6 682.0L427.4 678.4L429.3 681.1" fill="none" stroke="#5a5a5a" stroke-width="1.0"/>
<circle cx="430.0" cy="694.4" r="1.7" fill="none" stroke="#5a5a5a" stroke-width="1.0"/>
<path d="M427.8 703.8Q429.7 701.0 431.5 703.8T433.4 703.8" fill="none" stroke="#5a5a5a" stroke-width="1.0"/>
<ellipse cx="138.3" cy="810.2" rx="11.7" ry="21.4" fill="none" stroke="#e24e42" stroke-width="4.5"/>
<linearGradient id="g197" x1="0" x2="1"><stop offset="0" stop-color="#dedede"/><stop offset="0.25" stop-color="#f6f6f6"/><stop offset="0.7" stop-color="#efefef"/><stop offset="1" stop-color="#cfcfcf"/></linearGradient>
<path d="M144 782H189V834.4Q189 838.4 183 838.9Q166.5 841.4 150 838.9Q144 838.4 144 834.4Z" fill="url(#g197)"/>
<path d="M145.8 790.0Q148.4 786.3 150.9 790.0T153.4 790.0" fill="none" stroke="#5a5a5a" stroke-width="1.0"/>
<path d="M147.6 806.0L150.4 800.3L153.3 804.6" fill="none" stroke="#5a5a5a" stroke-width="1.0"/>
<rect x="148.5" y="816.5" width="4.2" height="2.9" fill="none" stroke="#5a5a5a" stroke-width="1.0"/>
<rect x="147.5" y="826.2" width="3.4" height="2.3" fill="none" stroke="#5a5a5a" stroke-width="1.0"/>
<path d="M155.6 790.9Q158.4 786.7 161.3 790.9T164.1 790.9" fill="none" stroke="#5a5a5a" stroke-width="1.0"/>
<path d="M156.4 803.6L159.2 798.0L162.0 802.2" fill="none" stroke="#5a5a5a" stroke-width="1.0"/>
<rect x="159.7" y="815.3" width="3.3" height="2.3" fill="none" stroke="#5a5a5a" stroke-width="1.0"/>
<path d="M157.2 829.8L159.2 825.9L161.1 828.8" fill="none" stroke="#5a5a5a" stroke-width="1.0"/>
<path d="M172.5 792.5L174.5 788.6L176.4 791.5" fill="none" stroke="#5a5a5a" stroke-width="1.0"/>
<circle cx="170.7" cy="801.3" r="2.1" fill="none" stroke="#5a5a5a" stroke-width="1.0"/>
<circle cx="172.0" cy="815.5" r="1.9" fill="none" stroke="#5a5a5a" stroke-width="1.0"/>
<circle cx="170.1" cy="829.7" r="1.8" fill="none" stroke="#5a5a5a" stroke-width="1.0"/>
<circle cx="182.8" cy="789.3" r="2.5" fill="none" stroke="#5a5a5a" stroke-width="1.0"/>
<path d="M181.2 803.0Q183.8 799.1 186.5 803.0T189.1 803.0" fill="none" stroke="#5a5a5a" stroke-width="1.0"/>
<path d="M182.4 818.9L184.7 814.3L187.0 817.7" fill="none" stroke="#5a5a5a" stroke-width="1.0"/>
<path d="M182.8 828.8Q184.5 826.3 186.2 828.8T187.8 828.8" fill="none" stroke="#5a5a5a" stroke-width="1.0"/>
<path d="M143 784C141 774 148 760 157.5 758C162.0 752 166.5 750 168.75 756C180.0 757 192 772 190 784Z" fill="#f6f7fa"/>
<rect x="175.6" y="777.5" width="2.2" height="1.6" fill="#3b5bb0" opacity="0.8"/>
<rect x="152.4" y="770.6" width="2.2" height="1.6" fill="#3b5bb0" opacity="0.8"/>
<rect x="166.7" y="778.0" width="2.2" height="1.6" fill="#3b5bb0" opacity="0.8"/>
<rect x="178.4" y="777.8" width="2.2" height="1.6" fill="#3b5bb0" opacity="0.8"/>
<rect x="169.8" y="779.4" width="2.2" height="1.6" fill="#3b5bb0" opacity="0.8"/>
<rect x="173.6" y="774.6" width="2.2" height="1.6" fill="#3b5bb0" opacity="0.8"/>
<rect x="156.0" y="758.7" width="2.2" height="1.6" fill="#3b5bb0" opacity="0.8"/>
<rect x="152.2" y="766.7" width="2.2" height="1.6" fill="#3b5bb0" opacity="0.8"/>
<rect x="151.1" y="778.1" width="2.2" height="1.6" fill="#3b5bb0" opacity="0.8"/>
<rect x="168.8" y="773.1" width="2.2" height="1.6" fill="#3b5bb0" opacity="0.8"/>
<line x1="193" y1="748" x2="171.9" y2="762.0" stroke="#f4f4f4" stroke-width="3.2" stroke-linecap="round"/>
<line x1="193" y1="748" x2="171.9" y2="762.0" stroke="#e0463c" stroke-width="3.2" stroke-dasharray="2.2 2.2"/>
<ellipse cx="309.9" cy="799.0" rx="12.8" ry="22.8" fill="none" stroke="#f2f2f2" stroke-width="4.9"/>
<linearGradient id="g229" x1="0" x2="1"><stop offset="0" stop-color="#dedede"/><stop offset="0.25" stop-color="#f6f6f6"/><stop offset="0.7" stop-color="#efefef"/><stop offset="1" stop-color="#cfcfcf"/></linearGradient>
<path d="M254.6 769H303.7V825Q303.7 829 297.7 829.5Q279.15 832 260.6 829.5Q254.6 829 254.6 825Z" fill="url(#g229)"/>
<ellipse cx="279.15" cy="769" rx="24.549999999999997" ry="3" fill="#f4f4f4"/>
<circle cx="261.4" cy="780.4" r="2.3" fill="none" stroke="#5a5a5a" stroke-width="1.0"/>
<circle cx="260.5" cy="790.4" r="2.9" fill="none" stroke="#5a5a5a" stroke-width="1.0"/>
<path d="M258.9 806.0L261.5 800.7L264.2 804.6" fill="none" stroke="#5a5a5a" stroke-width="1.0"/>
<rect x="260.4" y="818.9" width="3.9" height="2.7" fill="none" stroke="#5a5a5a" stroke-width="1.0"/>
<path d="M269.4 780.2Q271.7 776.9 273.9 780.2T276.2 780.2" fill="none" stroke="#5a5a5a" stroke-width="1.0"/>
<circle cx="270.9" cy="794.6" r="2.0" fill="none" stroke="#5a5a5a" stroke-width="1.0"/>
<rect x="271.9" y="805.0" width="3.4" height="2.4" fill="none" stroke="#5a5a5a" stroke-width="1.0"/>
<rect x="269.6" y="817.5" width="5.1" height="3.6" fill="none" stroke="#5a5a5a" stroke-width="1.0"/>
<circle cx="282.8" cy="777.3" r="2.0" fill="none" stroke="#5a5a5a" stroke-width="1.0"/>
<path d="M284.2 795.4L286.2 791.4L288.3 794.4" fill="none" stroke="#5a5a5a" stroke-width="1.0"/>
<rect x="283.3" y="804.1" width="3.5" height="2.5" fill="none" stroke="#5a5a5a" stroke-width="1.0"/>
<path d="M282.1 818.7L284.3 814.2L286.6 817.6" fill="none" stroke="#5a5a5a" stroke-width="1.0"/>
<path d="M294.4 781.1Q297.4 776.7 300.3 781.1T303.3 781.1" fill="none" stroke="#5a5a5a" stroke-width="1.0"/>
<rect x="297.1" y="789.9" width="5.8" height="4.0" fill="none" stroke="#5a5a5a" stroke-width="1.0"/>
<path d="M292.8 806.1L295.4 800.8L298.1 804.8" fill="none" stroke="#5a5a5a" stroke-width="1.0"/>
<path d="M297.1 819.4L299.8 813.9L302.6 818.0" fill="none" stroke="#5a5a5a" stroke-width="1.0"/>
<ellipse cx="422.1" cy="807.8" rx="11.2" ry="24.2" fill="none" stroke="#f2f2f2" stroke-width="4.3"/>
<linearGradient id="g249" x1="0" x2="1"><stop offset="0" stop-color="#dedede"/><stop offset="0.25" stop-color="#f6f6f6"/><stop offset="0.7" stop-color="#efefef"/><stop offset="1" stop-color="#cfcfcf"/></linearGradient>
<path d="M373.6 776H416.7V835.6Q416.7 839.6 410.7 840.1Q395.15 842.6 379.6 840.1Q373.6 839.6 373.6 835.6Z" fill="url(#g249)"/>
<path d="M380.8 784.8Q382.7 781.9 384.6 784.8T386.6 784.8" fill="none" stroke="#5a5a5a" stroke-width="1.0"/>
<path d="M377.3 793.6Q380.3 789.2 383.2 793.6T386.1 793.6" fill="none" stroke="#5a5a5a" stroke-width="1.0"/>
<path d="M378.1 807.9Q380.3 804.7 382.5 807.9T384.7 807.9" fill="none" stroke="#5a5a5a" stroke-width="1.0"/>
<path d="M378.3 821.6L379.9 818.4L381.5 820.8" fill="none" stroke="#5a5a5a" stroke-width="1.0"/>
<circle cx="382.5" cy="827.9" r="2.9" fill="none" stroke="#5a5a5a" stroke-width="1.0"/>
<path d="M395.0 782.7Q397.2 779.5 399.3 782.7T401.4 782.7" fill="none" stroke="#5a5a5a" stroke-width="1.0"/>
<path d="M392.9 797.1Q394.6 794.6 396.3 797.1T398.0 797.1" fill="none" stroke="#5a5a5a" stroke-width="1.0"/>
<circle cx="396.4" cy="808.6" r="2.0" fill="none" stroke="#5a5a5a" stroke-width="1.0"/>
<rect x="393.9" y="815.2" width="5.8" height="4.1" fill="none" stroke="#5a5a5a" stroke-width="1.0"/>
<path d="M395.5 831.6L397.5 827.5L399.5 830.5" fill="none" stroke="#5a5a5a" stroke-width="1.0"/>
<path d="M409.3 783.4Q410.9 780.9 412.6 783.4T414.2 783.4" fill="none" stroke="#5a5a5a" stroke-width="1.0"/>
<circle cx="411.6" cy="797.5" r="2.4" fill="none" stroke="#5a5a5a" stroke-width="1.0"/>
<rect x="405.0" y="806.4" width="4.5" height="3.1" fill="none" stroke="#5a5a5a" stroke-width="1.0"/>
<rect x="408.6" y="816.1" width="3.3" height="2.3" fill="none" stroke="#5a5a5a" stroke-width="1.0"/>
<path d="M405.9 831.4L407.9 827.4L409.9 830.4" fill="none" stroke="#5a5a5a" stroke-width="1.0"/>
<path d="M372.6 778C370.6 768 377.6 760 386.53000000000003 758C390.84000000000003 752 395.15 750 397.305 756C408.08 757 419.7 766 417.7 778Z" fill="#f6f7fa"/>
<rect x="404.0" y="775.6" width="2.2" height="1.6" fill="#3b5bb0" opacity="0.8"/>
<rect x="386.3" y="769.8" width="2.2" height="1.6" fill="#3b5bb0" opacity="0.8"/>
<rect x="387.8" y="768.0" width="2.2" height="1.6" fill="#3b5bb0" opacity="0.8"/>
<rect x="391.2" y="761.0" width="2.2" height="1.6" fill="#3b5bb0" opacity="0.8"/>
<rect x="382.6" y="761.7" width="2.2" height="1.6" fill="#3b5bb0" opacity="0.8"/>
<rect x="410.2" y="766.9" width="2.2" height="1.6" fill="#3b5bb0" opacity="0.8"/>
<rect x="384.8" y="774.3" width="2.2" height="1.6" fill="#3b5bb0" opacity="0.8"/>
<rect x="413.6" y="766.1" width="2.2" height="1.6" fill="#3b5bb0" opacity="0.8"/>
<rect x="381.8" y="761.5" width="2.2" height="1.6" fill="#3b5bb0" opacity="0.8"/>
<rect x="380.0" y="764.2" width="2.2" height="1.6" fill="#3b5bb0" opacity="0.8"/>
<line x1="368" y1="745" x2="390.0" y2="762.0" stroke="#f4f4f4" stroke-width="3.2" stroke-linecap="round"/>
<line x1="368" y1="745" x2="390.0" y2="762.0" stroke="#e0463c" stroke-width="3.2" stroke-dasharray="2.2 2.2"/>
<ellipse cx="186.4" cy="921.8" rx="11.1" ry="27.2" fill="none" stroke="#f2f2f2" stroke-width="4.2"/>
<linearGradient id="g280" x1="0" x2="1"><stop offset="0" stop-color="#dedede"/><stop offset="0.25" stop-color="#f6f6f6"/><stop offset="0.7" stop-color="#efefef"/><stop offset="1" stop-color="#cfcfcf"/></linearGradient>
<path d="M138.5 886H181V953.5Q181 957.5 175 958.0Q159.75 960.5 144.5 958.0Q138.5 957.5 138.5 953.5Z" fill="url(#g280)"/>
<rect x="141.6" y="891.9" width="3.9" height="2.7" fill="none" stroke="#5a5a5a" stroke-width="1.0"/>
<path d="M145.3 908.9Q147.5 905.6 149.7 908.9T151.9 908.9" fill="none" stroke="#5a5a5a" stroke-width="1.0"/>
<circle cx="146.8" cy="919.3" r="2.0" fill="none" stroke="#5a5a5a" stroke-width="1.0"/>
<rect x="143.5" y="932.7" width="4.2" height="2.9" fill="none" stroke="#5a5a5a" stroke-width="1.0"/>
<path d="M141.4 948.9Q143.5 945.7 145.7 948.9T147.8 948.9" fill="none" stroke="#5a5a5a" stroke-width="1.0"/>
<circle cx="159.4" cy="893.6" r="2.7" fill="none" stroke="#5a5a5a" stroke-width="1.0"/>
<path d="M155.2 907.3Q157.9 903.3 160.6 907.3T163.2 907.3" fill="none" stroke="#5a5a5a" stroke-width="1.0"/>
<path d="M160.4 920.7Q162.1 918.1 163.8 920.7T165.5 920.7" fill="none" stroke="#5a5a5a" stroke-width="1.0"/>
<rect x="160.4" y="931.4" width="3.5" height="2.5" fill="none" stroke="#5a5a5a" stroke-width="1.0"/>
<path d="M156.3 949.3Q158.0 946.7 159.8 949.3T161.5 949.3" fill="none" stroke="#5a5a5a" stroke-width="1.0"/>
<rect x="170.2" y="894.8" width="3.2" height="2.2" fill="none" stroke="#5a5a5a" stroke-width="1.0"/>
<path d="M170.1 912.3L172.6 907.2L175.1 911.0" fill="none" stroke="#5a5a5a" stroke-width="1.0"/>
<path d="M173.9 921.4Q176.2 917.9 178.6 921.4T180.9 921.4" fill="none" stroke="#5a5a5a" stroke-width="1.0"/>
<rect x="173.2" y="930.7" width="3.4" height="2.4" fill="none" stroke="#5a5a5a" stroke-width="1.0"/>
<circle cx="173.4" cy="945.6" r="2.4" fill="none" stroke="#5a5a5a" stroke-width="1.0"/>
<path d="M137.5 888C135.5 878 142.5 877 151.25 875C155.5 869 159.75 867 161.875 873C172.5 874 184 876 182 888Z" fill="#f6f7fa"/>
<rect x="161.1" y="886.0" width="2.2" height="1.6" fill="#9a5a2a" opacity="0.8"/>
<rect x="151.7" y="878.5" width="2.2" height="1.6" fill="#9a5a2a" opacity="0.8"/>
<rect x="172.1" y="877.7" width="2.2" height="1.6" fill="#9a5a2a" opacity="0.8"/>
<rect x="160.7" y="881.0" width="2.2" height="1.6" fill="#9a5a2a" opacity="0.8"/>
<rect x="142.6" y="879.5" width="2.2" height="1.6" fill="#9a5a2a" opacity="0.8"/>
<rect x="165.2" y="875.6" width="2.2" height="1.6" fill="#9a5a2a" opacity="0.8"/>
<rect x="148.6" y="884.7" width="2.2" height="1.6" fill="#9a5a2a" opacity="0.8"/>
<rect x="165.1" y="875.9" width="2.2" height="1.6" fill="#9a5a2a" opacity="0.8"/>
<rect x="149.8" y="879.7" width="2.2" height="1.6" fill="#9a5a2a" opacity="0.8"/>
<rect x="155.0" y="880.4" width="2.2" height="1.6" fill="#9a5a2a" opacity="0.8"/>
<line x1="133" y1="861" x2="154.7" y2="879.0" stroke="#f4f4f4" stroke-width="3.2" stroke-linecap="round"/>
<line x1="133" y1="861" x2="154.7" y2="879.0" stroke="#d88a2a" stroke-width="3.2" stroke-dasharray="2.2 2.2"/>
<ellipse cx="254.0" cy="917.0" rx="12.5" ry="22.8" fill="none" stroke="#f2f2f2" stroke-width="4.8"/>
<linearGradient id="g311" x1="0" x2="1"><stop offset="0" stop-color="#dedede"/><stop offset="0.25" stop-color="#f6f6f6"/><stop offset="0.7" stop-color="#efefef"/><stop offset="1" stop-color="#cfcfcf"/></linearGradient>
<path d="M260 887H308V943Q308 947 302 947.5Q284.0 950 266 947.5Q260 947 260 943Z" fill="url(#g311)"/>
<ellipse cx="284.0" cy="887" rx="24.0" ry="3" fill="#f4f4f4"/>
<ellipse cx="291.4" cy="927.5" rx="2.5" ry="6" fill="#c8c8c8" stroke="#8a8a8a" stroke-width="0.9" transform="rotate(-17 291.4 927.5)"/>
<ellipse cx="280.1" cy="893.3" rx="2.5" ry="6" fill="#c8c8c8" stroke="#8a8a8a" stroke-width="0.9" transform="rotate(-25 280.1 893.3)"/>
<ellipse cx="297.1" cy="896.2" rx="2.5" ry="6" fill="#c8c8c8" stroke="#8a8a8a" stroke-width="0.9" transform="rotate(-1 297.1 896.2)"/>
<ellipse cx="272.6" cy="929.8" rx="2.5" ry="6" fill="#c8c8c8" stroke="#8a8a8a" stroke-width="0.9" transform="rotate(-37 272.6 929.8)"/>
<ellipse cx="282.7" cy="905.7" rx="2.5" ry="6" fill="#c8c8c8" stroke="#8a8a8a" stroke-width="0.9" transform="rotate(47 282.7 905.7)"/>
<ellipse cx="269.1" cy="922.9" rx="2.5" ry="6" fill="#c8c8c8" stroke="#8a8a8a" stroke-width="0.9" transform="rotate(13 269.1 922.9)"/>
<ellipse cx="299.1" cy="916.3" rx="2.5" ry="6" fill="#c8c8c8" stroke="#8a8a8a" stroke-width="0.9" transform="rotate(49 299.1 916.3)"/>
<ellipse cx="267.1" cy="921.6" rx="2.5" ry="6" fill="#c8c8c8" stroke="#8a8a8a" stroke-width="0.9" transform="rotate(51 267.1 921.6)"/>
<ellipse cx="267.1" cy="894.1" rx="2.5" ry="6" fill="#c8c8c8" stroke="#8a8a8a" stroke-width="0.9" transform="rotate(12 267.1 894.1)"/>
<ellipse cx="280.8" cy="927.1" rx="2.5" ry="6" fill="#c8c8c8" stroke="#8a8a8a" stroke-width="0.9" transform="rotate(-38 280.8 927.1)"/>
<ellipse cx="282.1" cy="927.2" rx="2.5" ry="6" fill="#c8c8c8" stroke="#8a8a8a" stroke-width="0.9" transform="rotate(-22 282.1 927.2)"/>
<ellipse cx="269.3" cy="896.8" rx="2.5" ry="6" fill="#c8c8c8" stroke="#8a8a8a" stroke-width="0.9" transform="rotate(-40 269.3 896.8)"/>
<ellipse cx="374.3" cy="927.8" rx="11.9" ry="22.6" fill="none" stroke="#3aa0e0" stroke-width="4.6"/>
<linearGradient id="g327" x1="0" x2="1"><stop offset="0" stop-color="#dedede"/><stop offset="0.25" stop-color="#f6f6f6"/><stop offset="0.7" stop-color="#efefef"/><stop offset="1" stop-color="#cfcfcf"/></linearGradient>
<path d="M380 898H425.6V953.5Q425.6 957.5 419.6 958.0Q402.8 960.5 386 958.0Q380 957.5 380 953.5Z" fill="url(#g327)"/>
<path d="M381.8 907.4Q384.2 903.9 386.5 907.4T388.8 907.4" fill="none" stroke="#3a3f8a" stroke-width="1.0"/>
<path d="M381.2 923.0L383.4 918.8L385.5 921.9" fill="none" stroke="#3a3f8a" stroke-width="1.0"/>
<circle cx="388.1" cy="933.1" r="1.8" fill="none" stroke="#3a3f8a" stroke-width="1.0"/>
<circle cx="384.6" cy="946.1" r="2.9" fill="none" stroke="#3a3f8a" stroke-width="1.0"/>
<path d="M395.3 910.1L397.4 905.8L399.5 909.0" fill="none" stroke="#3a3f8a" stroke-width="1.0"/>
<path d="M397.0 919.7Q398.7 917.2 400.4 919.7T402.0 919.7" fill="none" stroke="#3a3f8a" stroke-width="1.0"/>
<path d="M393.4 935.9L395.6 931.4L397.8 934.8" fill="none" stroke="#3a3f8a" stroke-width="1.0"/>
<path d="M394.8 948.8Q396.4 946.3 398.1 948.8T399.7 948.8" fill="none" stroke="#3a3f8a" stroke-width="1.0"/>
<path d="M405.1 907.3Q407.2 904.1 409.4 907.3T411.6 907.3" fill="none" stroke="#3a3f8a" stroke-width="1.0"/>
<path d="M403.3 920.8L406.2 915.0L409.1 919.3" fill="none" stroke="#3a3f8a" stroke-width="1.0"/>
<path d="M404.5 933.7L407.0 928.8L409.4 932.5" fill="none" stroke="#3a3f8a" stroke-width="1.0"/>
<path d="M404.9 951.6L407.4 946.6L409.8 950.3" fill="none" stroke="#3a3f8a" stroke-width="1.0"/>
<path d="M418.2 910.5L421.1 904.7L424.0 909.1" fill="none" stroke="#3a3f8a" stroke-width="1.0"/>
<circle cx="417.4" cy="921.3" r="2.9" fill="none" stroke="#3a3f8a" stroke-width="1.0"/>
<path d="M415.3 932.1Q417.5 928.7 419.8 932.1T422.1 932.1" fill="none" stroke="#3a3f8a" stroke-width="1.0"/>
<path d="M420.2 946.2Q422.2 943.3 424.1 946.2T426.1 946.2" fill="none" stroke="#3a3f8a" stroke-width="1.0"/>
<path d="M379 900C377 890 384 878 393.68 876C398.24 870 402.8 868 405.08000000000004 874C416.48 875 428.6 888 426.6 900Z" fill="#f6f7fa"/>
<rect x="415.3" y="878.9" width="2.2" height="1.6" fill="#3b5bb0" opacity="0.8"/>
<rect x="402.7" y="876.2" width="2.2" height="1.6" fill="#3b5bb0" opacity="0.8"/>
<rect x="419.9" y="882.7" width="2.2" height="1.6" fill="#3b5bb0" opacity="0.8"/>
<rect x="410.4" y="879.3" width="2.2" height="1.6" fill="#3b5bb0" opacity="0.8"/>
<rect x="392.4" y="894.9" width="2.2" height="1.6" fill="#3b5bb0" opacity="0.8"/>
<rect x="401.2" y="893.2" width="2.2" height="1.6" fill="#3b5bb0" opacity="0.8"/>
<rect x="406.6" y="887.3" width="2.2" height="1.6" fill="#3b5bb0" opacity="0.8"/>
<rect x="398.5" y="879.5" width="2.2" height="1.6" fill="#3b5bb0" opacity="0.8"/>
<rect x="399.1" y="890.3" width="2.2" height="1.6" fill="#3b5bb0" opacity="0.8"/>
<rect x="402.1" y="888.0" width="2.2" height="1.6" fill="#3b5bb0" opacity="0.8"/>
<line x1="429" y1="866" x2="408.3" y2="880.0" stroke="#f4f4f4" stroke-width="3.2" stroke-linecap="round"/>
<line x1="429" y1="866" x2="408.3" y2="880.0" stroke="#e0463c" stroke-width="3.2" stroke-dasharray="2.2 2.2"/>
<ellipse cx="136.1" cy="1030.0" rx="14.3" ry="22.8" fill="none" stroke="#111" stroke-width="5.5"/>
<linearGradient id="g359" x1="0" x2="1"><stop offset="0" stop-color="#dedede"/><stop offset="0.25" stop-color="#f6f6f6"/><stop offset="0.7" stop-color="#efefef"/><stop offset="1" stop-color="#cfcfcf"/></linearGradient>
<path d="M143 1000H198V1056Q198 1060 192 1060.5Q170.5 1063 149 1060.5Q143 1060 143 1056Z" fill="url(#g359)"/>
<ellipse cx="170.5" cy="1000" rx="27.5" ry="3" fill="#f4f4f4"/>
<ellipse cx="170.5" cy="1001" rx="27.5" ry="3" fill="#f5f5f5" stroke="#111" stroke-width="2"/>
<circle cx="146.8" cy="1010.1" r="1.7" fill="none" stroke="#4a4a9a" stroke-width="1.0"/>
<path d="M145.6 1021.4Q147.3 1018.8 149.1 1021.4T150.8 1021.4" fill="none" stroke="#4a4a9a" stroke-width="1.0"/>
<rect x="149.1" y="1037.6" width="3.7" height="2.6" fill="none" stroke="#4a4a9a" stroke-width="1.0"/>
<circle cx="148.1" cy="1050.1" r="2.5" fill="none" stroke="#4a4a9a" stroke-width="1.0"/>
<path d="M158.9 1011.5L160.9 1007.5L162.9 1010.5" fill="none" stroke="#4a4a9a" stroke-width="1.0"/>
<rect x="157.0" y="1023.4" width="3.8" height="2.6" fill="none" stroke="#4a4a9a" stroke-width="1.0"/>
<rect x="155.9" y="1033.8" width="4.0" height="2.8" fill="none" stroke="#4a4a9a" stroke-width="1.0"/>
<rect x="155.6" y="1046.9" width="6.0" height="4.2" fill="none" stroke="#4a4a9a" stroke-width="1.0"/>
<circle cx="171.2" cy="1008.5" r="2.2" fill="none" stroke="#4a4a9a" stroke-width="1.0"/>
<path d="M165.8 1023.4Q168.5 1019.3 171.3 1023.4T174.0 1023.4" fill="none" stroke="#4a4a9a" stroke-width="1.0"/>
<circle cx="172.6" cy="1034.2" r="2.0" fill="none" stroke="#4a4a9a" stroke-width="1.0"/>
<rect x="165.5" y="1048.1" width="5.5" height="3.9" fill="none" stroke="#4a4a9a" stroke-width="1.0"/>
<path d="M180.8 1009.9Q183.7 1005.6 186.5 1009.9T189.3 1009.9" fill="none" stroke="#4a4a9a" stroke-width="1.0"/>
<circle cx="182.0" cy="1024.9" r="2.5" fill="none" stroke="#4a4a9a" stroke-width="1.0"/>
<rect x="177.1" y="1035.3" width="4.9" height="3.5" fill="none" stroke="#4a4a9a" stroke-width="1.0"/>
<path d="M177.5 1050.4L179.2 1047.0L180.8 1049.5" fill="none" stroke="#4a4a9a" stroke-width="1.0"/>
<circle cx="190.2" cy="1011.7" r="2.9" fill="none" stroke="#4a4a9a" stroke-width="1.0"/>
<path d="M192.0 1025.2L194.1 1020.9L196.2 1024.1" fill="none" stroke="#4a4a9a" stroke-width="1.0"/>
<path d="M188.1 1034.2Q190.4 1030.7 192.7 1034.2T195.0 1034.2" fill="none" stroke="#4a4a9a" stroke-width="1.0"/>
<rect x="188.2" y="1046.0" width="4.3" height="3.0" fill="none" stroke="#4a4a9a" stroke-width="1.0"/>
<ellipse cx="256.2" cy="1050.0" rx="12.0" ry="22.8" fill="none" stroke="#111" stroke-width="4.6"/>
<linearGradient id="g384" x1="0" x2="1"><stop offset="0" stop-color="#dedede"/><stop offset="0.25" stop-color="#f6f6f6"/><stop offset="0.7" stop-color="#efefef"/><stop offset="1" stop-color="#cfcfcf"/></linearGradient>
<path d="M262 1020H308V1076Q308 1080 302 1080.5Q285.0 1083 268 1080.5Q262 1080 262 1076Z" fill="url(#g384)"/>
<path d="M266.6 1028.5L268.4 1024.9L270.3 1027.6" fill="none" stroke="#5a5a5a" stroke-width="1.0"/>
<circle cx="267.3" cy="1041.2" r="2.0" fill="none" stroke="#5a5a5a" stroke-width="1.0"/>
<path d="M264.7 1056.1Q266.8 1052.9 268.9 1056.1T271.0 1056.1" fill="none" stroke="#5a5a5a" stroke-width="1.0"/>
<rect x="262.6" y="1068.7" width="5.4" height="3.8" fill="none" stroke="#5a5a5a" stroke-width="1.0"/>
<path d="M275.8 1028.3Q278.7 1023.9 281.6 1028.3T284.5 1028.3" fill="none" stroke="#5a5a5a" stroke-width="1.0"/>
<path d="M278.5 1041.9Q281.3 1037.7 284.0 1041.9T286.8 1041.9" fill="none" stroke="#5a5a5a" stroke-width="1.0"/>
<rect x="277.0" y="1053.2" width="5.4" height="3.8" fill="none" stroke="#5a5a5a" stroke-width="1.0"/>
<path d="M274.3 1069.5Q276.8 1065.8 279.3 1069.5T281.8 1069.5" fill="none" stroke="#5a5a5a" stroke-width="1.0"/>
<rect x="286.6" y="1027.9" width="4.2" height="3.0" fill="none" stroke="#5a5a5a" stroke-width="1.0"/>
<circle cx="289.0" cy="1041.2" r="2.3" fill="none" stroke="#5a5a5a" stroke-width="1.0"/>
<rect x="286.1" y="1053.8" width="5.5" height="3.8" fill="none" stroke="#5a5a5a" stroke-width="1.0"/>
<path d="M288.1 1070.9Q289.8 1068.4 291.4 1070.9T293.1 1070.9" fill="none" stroke="#5a5a5a" stroke-width="1.0"/>
<circle cx="301.3" cy="1029.3" r="2.5" fill="none" stroke="#5a5a5a" stroke-width="1.0"/>
<rect x="301.5" y="1040.9" width="5.5" height="3.9" fill="none" stroke="#5a5a5a" stroke-width="1.0"/>
<rect x="300.5" y="1055.8" width="4.9" height="3.5" fill="none" stroke="#5a5a5a" stroke-width="1.0"/>
<path d="M302.0 1067.7Q303.9 1064.8 305.8 1067.7T307.7 1067.7" fill="none" stroke="#5a5a5a" stroke-width="1.0"/>
<path d="M261 1022C259 1012 266 998 275.8 996C280.4 990 285.0 988 287.3 994C298.8 995 311 1010 309 1022Z" fill="#f6f7fa"/>
<rect x="302.5" y="999.8" width="2.2" height="1.6" fill="#3b5bb0" opacity="0.8"/>
<rect x="279.4" y="999.6" width="2.2" height="1.6" fill="#3b5bb0" opacity="0.8"/>
<rect x="303.8" y="1015.6" width="2.2" height="1.6" fill="#3b5bb0" opacity="0.8"/>
<rect x="272.7" y="1017.2" width="2.2" height="1.6" fill="#3b5bb0" opacity="0.8"/>
<rect x="298.7" y="1012.1" width="2.2" height="1.6" fill="#3b5bb0" opacity="0.8"/>
<rect x="291.7" y="1003.8" width="2.2" height="1.6" fill="#3b5bb0" opacity="0.8"/>
<rect x="280.6" y="1006.9" width="2.2" height="1.6" fill="#3b5bb0" opacity="0.8"/>
<rect x="299.0" y="1014.7" width="2.2" height="1.6" fill="#3b5bb0" opacity="0.8"/>
<rect x="291.0" y="1003.4" width="2.2" height="1.6" fill="#3b5bb0" opacity="0.8"/>
<rect x="275.0" y="1005.3" width="2.2" height="1.6" fill="#3b5bb0" opacity="0.8"/>
<line x1="311" y1="984" x2="290.5" y2="1000.0" stroke="#f4f4f4" stroke-width="3.2" stroke-linecap="round"/>
<line x1="311" y1="984" x2="290.5" y2="1000.0" stroke="#e0463c" stroke-width="3.2" stroke-dasharray="2.2 2.2"/>
<path d="M373.6 1000Q400 992 426.6 1000V1040H373.6Z" fill="#0d0d0d"/><ellipse cx="400" cy="1001" rx="26.5" ry="4" fill="#d8d8d8"/><text x="392" y="1026" font-size="7" fill="#b89a4a" font-family="Liberation Sans" font-weight="700">THE</text>
</g>
<rect x="455" y="441" width="8" height="342" rx="4" fill="#5f5f63"/>
</svg>
<!--PANEL_END-->
<!-- ============ CANVAS AREA ============ -->
<div class="a" style="left:490px;top:146px;width:1430px;height:53px;background:#fff"></div>
<div class="a" style="left:490px;top:199px;width:1430px;height:768px;background:#ebebf0"></div>
<div class="a" style="left:490px;top:967px;width:1430px;height:19px;background:#f2f2f4"></div>
<div class="a" style="left:490px;top:986px;width:1430px;height:44px;background:#fff"></div>

<div class="a" style="left:490px;top:199px;width:2px;height:768px;background:#fafafb"></div>
<svg style="left:488px;top:535px" width="18" height="104" viewBox="0 0 18 104"><path d="M0 0H2Q2 14 10 20Q15 24 15 34V70Q15 80 10 84Q2 90 2 104H0Z" fill="#18191d"/><path d="M9 50L5.5 54L9 58" stroke="#fff" stroke-width="1.6" fill="none" stroke-linecap="round"/></svg>
<!-- toolbar -->
<div class="t" style="left:513px;top:164px;font-size:17px;color:#0e1318;-webkit-text-stroke:0.3px #0e1318">Edit image</div>
<div class="t" style="left:623px;top:164px;font-size:17px;color:#0e1318;-webkit-text-stroke:0.3px #0e1318">Crop</div>
<div class="t" style="left:691px;top:164px;font-size:17px;color:#0e1318;-webkit-text-stroke:0.3px #0e1318">Flip</div>
<svg style="left:741px;top:160px" width="25" height="25" viewBox="0 0 25 25"><circle cx="12.5" cy="12.5" r="11" stroke="#0e1318" stroke-width="1.9" fill="none"/><circle cx="12.5" cy="7.6" r="1.5" fill="#0e1318"/><path d="M12.5 11V18" stroke="#0e1318" stroke-width="2.2" stroke-linecap="round"/></svg>
<div class="a" style="left:780px;top:160px;width:1px;height:24px;background:#e5e6ea"></div>
<svg style="left:796px;top:159px" width="28" height="28" viewBox="0 0 28 28"><circle cx="10" cy="17" r="7.5" fill="none" stroke="#c9c9cc" stroke-width="1.8"/><circle cx="12" cy="15" r="7.5" fill="#fff" stroke="#9a9a9e" stroke-width="1.8"/><circle cx="15" cy="11.5" r="8" fill="#fff" stroke="#0e1318" stroke-width="2"/></svg>
<div class="t" style="left:832px;top:164px;font-size:17.3px;color:#0e1318;-webkit-text-stroke:0.3px #0e1318">Animate</div>
<div class="t" style="left:1646px;top:164px;font-size:17px;color:#0e1318;-webkit-text-stroke:0.3px #0e1318">Position</div>
<div class="a" style="left:1732px;top:160px;width:1px;height:25px;background:#e5e6ea"></div>
<svg style="left:1749px;top:160px" width="22" height="26" viewBox="0 0 22 26"><path d="M3.5 2H17.5Q20 2 20 4.5V6.5Q20 9 17.5 9H3.5Q1 9 1 6.5V4.5Q1 2 3.5 2Z" stroke="#0e1318" stroke-width="1.7" fill="none"/><path d="M20 5.5Q21 5.5 21 7V10Q21 12.5 18.5 12.5H11.5Q9.5 12.5 9.5 14.5V16" stroke="#0e1318" stroke-width="1.7" fill="none"/><rect x="7.5" y="16" width="4" height="7.5" rx="2" stroke="#0e1318" stroke-width="1.7" fill="none"/></svg>
<svg style="left:1789.5px;top:161.5px" width="22" height="22" viewBox="0 0 24 24"><g fill="#0e1318"><rect x="0" y="0" width="4.5" height="4.5"/><rect x="0" y="9.5" width="4.5" height="4.5"/><rect x="0" y="19" width="4.5" height="4.5"/><rect x="4.7" y="4.7" width="4.5" height="4.5" opacity="0.6"/><rect x="4.7" y="14.3" width="4.5" height="4.5" opacity="0.6"/><rect x="9.5" y="0" width="4.5" height="4.5" opacity="0.45"/><rect x="9.5" y="9.5" width="4.5" height="4.5" opacity="0.45"/><rect x="9.5" y="19" width="4.5" height="4.5" opacity="0.45"/><rect x="14.2" y="4.7" width="4.5" height="4.5" opacity="0.28"/><rect x="14.2" y="14.3" width="4.5" height="4.5" opacity="0.28"/><rect x="19" y="0" width="4.5" height="4.5" opacity="0.12"/><rect x="19" y="9.5" width="4.5" height="4.5" opacity="0.12"/><rect x="19" y="19" width="4.5" height="4.5" opacity="0.12"/></g></svg>
<svg style="left:0;top:0" width="1920" height="1080" viewBox="0 0 1920 1080"><g fill="none" stroke="#0e1318" stroke-width="1.7" stroke-linecap="round"><path d="M1840 166.8Q1836.5 165.2 1832.5 165.5Q1827.3 166.2 1827.3 170.3Q1827.5 174.6 1832.8 174.9L1837.5 174.6"/><path d="M1835.5 172.3Q1839.5 169.6 1843.8 169.7Q1849.2 170.2 1849 174.9Q1848.6 179.4 1843.2 179.7Q1838.5 179.9 1834.8 178.3"/></g></svg>
<div class="a" style="left:1865px;top:160px;width:1px;height:25px;background:#e5e6ea"></div>
<svg style="left:1882px;top:158px" width="22" height="28" viewBox="0 0 22 28"><path d="M5.5 12V7A5.5 5.5 0 0 1 16.5 7V8" stroke="#0e1318" stroke-width="2" fill="none"/><rect x="2" y="12" width="18" height="14" rx="2" stroke="#0e1318" stroke-width="2" fill="none"/><path d="M11 16.5V21.5" stroke="#0e1318" stroke-width="2.4" stroke-linecap="round"/><circle cx="11" cy="17" r="1.8" fill="#0e1318"/></svg>
<!-- right scrollbar -->
<div class="a" style="left:1901px;top:199px;width:19px;height:768px;background:#ececef"></div>
<svg style="left:1905px;top:207px" width="10" height="6" viewBox="0 0 10 6"><path d="M1 5.5L5 1L9 5.5Z" fill="#5a5a5a"/></svg>
<svg style="left:1905px;top:953px" width="10" height="6" viewBox="0 0 10 6"><path d="M1 0.5L5 5L9 0.5Z" fill="#5a5a5a"/></svg>
<div class="a" style="left:1903px;top:719px;width:15px;height:19px;background:#c2c2c4"></div>

<!-- page 44 header -->
<div class="t" style="left:873px;top:214px;font-size:16px;color:#3b3d42;letter-spacing:0.42px"><span style="color:#0e1318;-webkit-text-stroke:0.5px #0e1318">Page 44 - </span><span style="color:#6b6e75">Add page title</span></div>
<!--PAGEICONS_START-->
<svg style="left:0;top:0" width="1920" height="1080" viewBox="0 0 1920 1080"><g fill="none" stroke="#4a4d55" stroke-width="1.6" stroke-linecap="round" stroke-linejoin="round">
<path d="M1292 224L1298.5 217.5L1305 224"/>
<path d="M1333 217L1339.5 223.5L1346 217"/>
<path d="M1375 219V214.5A5.5 5.5 0 0 1 1386 214.5V216"/><rect x="1372.5" y="219" width="15" height="11.5" rx="1.5"/><path d="M1380 222.5V226.5"/>
<path d="M1416 227H1414.5Q1413 227 1413 225.5V213.5Q1413 212 1414.5 212H1424.5Q1426 212 1426 213.5V214.5"/><rect x="1417.5" y="215.5" width="12" height="13" rx="1.5"/><path d="M1423.5 219V225M1420.5 222H1426.5"/>
<path d="M1453.5 215H1470.5M1458.5 215V213Q1458.5 211.5 1460 211.5H1464Q1465.5 211.5 1465.5 213V215M1455.5 215.5L1456.5 228Q1456.7 229.5 1458 229.5H1466Q1467.3 229.5 1467.5 228L1468.5 215.5M1460 219V225.5M1464 219V225.5"/>
<path d="M1502 212H1496Q1494.5 212 1494.5 213.5V228.5Q1494.5 230 1496 230H1509.5Q1511 230 1511 228.5V225M1508 208V218M1503 213H1513"/>
</g></svg>
<svg style="left:0;top:0" width="1920" height="1080" viewBox="0 0 1920 1080"><g fill="none" stroke="#4a4d55" stroke-width="1.6" stroke-linecap="round" stroke-linejoin="round">
<path d="M1292 933L1298.5 926.5L1305 933"/>
<path d="M1333 926L1339.5 932.5L1346 926"/>
<path d="M1375 928V923.5A5.5 5.5 0 0 1 1386 923.5V925"/><rect x="1372.5" y="928" width="15" height="11.5" rx="1.5"/><path d="M1380 931.5V935.5"/>
<path d="M1416 936H1414.5Q1413 936 1413 934.5V922.5Q1413 921 1414.5 921H1424.5Q1426 921 1426 922.5V923.5"/><rect x="1417.5" y="924.5" width="12" height="13" rx="1.5"/><path d="M1423.5 928V934M1420.5 931H1426.5"/>
<path d="M1453.5 924H1470.5M1458.5 924V922Q1458.5 920.5 1460 920.5H1464Q1465.5 920.5 1465.5 922V924M1455.5 924.5L1456.5 937Q1456.7 938.5 1458 938.5H1466Q1467.3 938.5 1467.5 937L1468.5 924.5M1460 928V934.5M1464 928V934.5"/>
<path d="M1502 921H1496Q1494.5 921 1494.5 922.5V937.5Q1494.5 939 1496 939H1509.5Q1511 939 1511 937.5V934M1508 917V927M1503 922H1513"/>
</g></svg>
<!--PAGEICONS_END-->
<!-- page 44 -->
<div class="a" style="left:873px;top:241px;width:646px;height:645px;background:#020202;overflow:hidden"><!--PAGE_START-->
<svg style="left:0;top:0" width="646" height="645" viewBox="873 241 646 645">
<defs>
<radialGradient id="bl1" cx="0.35" cy="0.35" r="0.7"><stop offset="0" stop-color="#7a7a7a"/><stop offset="0.25" stop-color="#3a3a3a"/><stop offset="0.6" stop-color="#151515"/><stop offset="1" stop-color="#050505"/></radialGradient>
<radialGradient id="bl2" cx="0.5" cy="0.3" r="0.7"><stop offset="0" stop-color="#3c3c3c"/><stop offset="0.5" stop-color="#222"/><stop offset="1" stop-color="#0a0a0a"/></radialGradient>
<linearGradient id="mugb" x1="0" x2="1"><stop offset="0" stop-color="#e6e6e6"/><stop offset="0.12" stop-color="#f0f0f0"/><stop offset="0.45" stop-color="#f3f3f3"/><stop offset="0.8" stop-color="#ececec"/><stop offset="0.95" stop-color="#dedede"/><stop offset="1" stop-color="#e8e8e8"/></linearGradient>
<linearGradient id="mugt" x1="0" y1="0" x2="0" y2="1"><stop offset="0" stop-color="#000" stop-opacity="0.06"/><stop offset="0.5" stop-color="#000" stop-opacity="0"/></linearGradient>
<radialGradient id="shad" cx="0.5" cy="0.5" r="0.5"><stop offset="0" stop-color="#bdbdbd" stop-opacity="0.9"/><stop offset="0.6" stop-color="#d9d9d9" stop-opacity="0.6"/><stop offset="1" stop-color="#fff" stop-opacity="0"/></radialGradient>
<filter id="blur2" x="-100%" y="-100%" width="300%" height="300%"><feGaussianBlur stdDeviation="2"/></filter>
<filter id="blur6" x="-60%" y="-200%" width="220%" height="500%"><feGaussianBlur stdDeviation="9"/></filter>
<linearGradient id="handle" x1="0" x2="1"><stop offset="0" stop-color="#e0e0e0"/><stop offset="0.6" stop-color="#f0f0f0"/><stop offset="0.85" stop-color="#e2e2e2"/><stop offset="1" stop-color="#cfcfcf"/></linearGradient>
</defs>
<rect x="873" y="241" width="646" height="645" fill="#030303"/>
<radialGradient id="bl3" cx="0.3" cy="0.3" r="0.8"><stop offset="0" stop-color="#5a5a5a"/><stop offset="0.2" stop-color="#2a2a2a"/><stop offset="0.55" stop-color="#0e0e0e"/><stop offset="1" stop-color="#040404"/></radialGradient>
<radialGradient id="bl4" cx="0.3" cy="0.3" r="0.75"><stop offset="0" stop-color="#2a2a2a"/><stop offset="0.5" stop-color="#141414"/><stop offset="1" stop-color="#050505"/></radialGradient>
<path d="M932 428Q897 398 891 352Q890 305 938 288Q978 280 1000 308V428Z" fill="url(#bl4)"/>
<path d="M893 335Q905 298 945 289Q985 284 995 306" stroke="#777" stroke-width="1.6" fill="none" opacity="0.6" filter="url(#blur2)"/>
<path d="M899 318Q906 312 910 318" stroke="#888" stroke-width="2" fill="none" opacity="0.5" filter="url(#blur2)"/>
<ellipse cx="906" cy="378" rx="6" ry="20" fill="#555" opacity="0.55" filter="url(#blur2)" transform="rotate(-12 906 378)"/>
<radialGradient id="tex" cx="0.5" cy="0.35" r="0.6"><stop offset="0" stop-color="#303030"/><stop offset="0.6" stop-color="#1e1e1e"/><stop offset="1" stop-color="#0c0c0c"/></radialGradient>
<filter id="noise" x="0" y="0" width="100%" height="100%"><feTurbulence type="fractalNoise" baseFrequency="0.9" numOctaves="1" seed="3"/><feColorMatrix values="0 0 0 0 1  0 0 0 0 1  0 0 0 0 1  0 0 0 1.6 -0.9"/><feComposite in2="SourceGraphic" operator="in"/></filter>
<ellipse cx="1127" cy="310" rx="42" ry="42" fill="url(#tex)"/>
<ellipse cx="1127" cy="310" rx="42" ry="42" fill="#fff" filter="url(#noise)" opacity="0.18"/>
<ellipse cx="1350" cy="318" rx="68" ry="60" fill="url(#tex)"/>
<ellipse cx="1350" cy="318" rx="68" ry="60" fill="#fff" filter="url(#noise)" opacity="0.2"/>
<path d="M1290 300Q1305 265 1350 259" stroke="#666" stroke-width="1.5" fill="none" opacity="0.6"/>
<ellipse cx="1468" cy="498" rx="20" ry="42" fill="url(#bl3)"/>
<ellipse cx="1470" cy="478" rx="4" ry="13" fill="#888" opacity="0.45" filter="url(#blur2)"/>
<rect x="937" y="305" width="517" height="517" fill="#ffffff"/>
<ellipse cx="1090" cy="722" rx="120" ry="30" fill="#cdcdcd" opacity="0.7" filter="url(#blur6)"/>
<ellipse cx="1190" cy="732" rx="120" ry="14" fill="#bdbdbd" opacity="0.7" filter="url(#blur6)"/>
<ellipse cx="1345" cy="690" rx="45" ry="14" fill="#d9d9d9" opacity="0.6" filter="url(#blur6)"/>
<path fill-rule="evenodd" d="M1256 573A62 84 0 1 0 1380 573A62 84 0 1 0 1256 573ZM1282 573A40 66 0 1 0 1362 573A40 66 0 1 0 1282 573Z" fill="url(#handle)"/>
<path d="M1070.5 456Q1182 440 1293.6 456V716Q1293 726 1278 729Q1182 744 1086 729Q1071 726 1070.5 716Z" fill="url(#mugb)"/>
<path d="M1070.5 456Q1182 440 1293.6 456V600Q1182 590 1070.5 600Z" fill="url(#mugt)"/>
<ellipse cx="1182" cy="455" rx="111.5" ry="7" fill="#e3e3e3"/>
<ellipse cx="1182" cy="455" rx="104" ry="5" fill="#d2d2d2"/>
<path d="M1086 729Q1182 744 1278 729" stroke="#c4c4c4" stroke-width="1.5" fill="none"/>
<path d="M1070.5 548Q1074 560 1078 585Q1088 572 1098 568Q1104 556 1111 552Q1114 575 1112 598Q1118 612 1114 632Q1112 655 1104 672Q1100 690 1094 706Q1088 690 1082 700Q1078 690 1074 704L1070.5 700Z" fill="#241b18"/>
<path d="M1098 572Q1106 562 1109 558Q1110 580 1104 592Q1100 585 1098 572Z" fill="#5a3a30"/>
<path d="M1074 612Q1082 606 1086 616Q1084 624 1078 626Q1072 622 1074 612Z" fill="#a07a4a"/>
<path d="M1076 636Q1090 632 1098 642Q1100 660 1092 672Q1082 676 1076 664Z" fill="#d8cfc4"/>
<ellipse cx="1088" cy="652" rx="5" ry="4" fill="#1a1a1a"/><circle cx="1080" cy="620" r="2.5" fill="#111"/>
<path d="M1078 672L1076 700M1086 676L1084 704M1094 670L1096 696" stroke="#3a2a24" stroke-width="2"/>
<path d="M1116 612Q1120 592 1140 587Q1162 582 1180 590Q1196 598 1199 618Q1200 645 1192 668Q1196 690 1188 705Q1180 716 1160 717Q1138 716 1130 704Q1122 690 1124 670Q1114 645 1116 612Z" fill="#eee6d6"/>
<path d="M1120 606Q1130 590 1148 588Q1146 600 1138 606Q1130 612 1126 628Q1118 620 1120 606Z" fill="#cfa86a"/>
<path d="M1156 588Q1180 584 1194 602Q1198 616 1196 636Q1188 626 1182 618Q1172 606 1160 600Z" fill="#c7a060"/>
<path d="M1126 618Q1134 612 1140 620Q1142 630 1132 632Q1124 630 1126 618Z" fill="#b88a50"/>
<path d="M1160 606Q1172 598 1182 608Q1186 620 1174 624Q1162 624 1160 606Z" fill="#b88a50"/>
<ellipse cx="1132" cy="623" rx="4.5" ry="5" fill="#2a1e14"/><ellipse cx="1170" cy="612" rx="5.5" ry="6" fill="#2a1e14"/>
<ellipse cx="1152" cy="634" rx="8" ry="7" fill="#1c1c1c"/>
<path d="M1140 654Q1152 650 1164 646" stroke="#4a4038" stroke-width="2" fill="none"/>
<path d="M1134 690Q1140 705 1136 715M1146 694Q1152 708 1150 717M1164 688Q1172 702 1176 714M1126 690Q1128 700 1124 708" stroke="#7f8a68" stroke-width="1.6" fill="none"/>
<path d="M1203 640Q1200 625 1210 612Q1214 580 1222 553Q1238 568 1248 596Q1262 592 1272 596Q1280 578 1291 556Q1294 590 1293.6 620V719H1204Q1196 700 1202 680Q1196 660 1203 640Z" fill="#1d1d1f"/>
<path d="M1218 572Q1228 582 1236 600Q1226 598 1220 594Z" fill="#3d3d40"/><path d="M1288 570Q1286 590 1282 602Q1278 598 1278 594Z" fill="#3d3d40"/>
<path d="M1222 630Q1236 618 1256 624Q1278 620 1288 636Q1290 660 1280 678Q1266 692 1248 690Q1230 684 1224 664Q1218 648 1222 630Z" fill="#2c2c2f"/>
<ellipse cx="1243" cy="638" rx="4" ry="3.2" fill="#0c0c0c"/><circle cx="1242" cy="637" r="1.2" fill="#888"/><ellipse cx="1274" cy="632" rx="4" ry="3.2" fill="#0c0c0c"/><circle cx="1273" cy="631" r="1.2" fill="#888"/>
<path d="M1250 660Q1262 652 1276 662Q1276 672 1264 674Q1252 672 1250 660Z" fill="#3a3a3e"/><ellipse cx="1265" cy="663" rx="6" ry="4.5" fill="#0e0e0e"/>
<path d="M1251 680Q1258 676 1266 680Q1268 694 1258 696Q1250 692 1251 680Z" fill="#e0a3ad"/>
<path d="M1210 690Q1230 700 1240 715M1260 700Q1275 705 1285 715" stroke="#3a3a3e" stroke-width="2" fill="none"/>
<path d="M1296 540V615" stroke="#777" stroke-width="1.4" stroke-dasharray="2.5 1.5"/>
</svg>
<!--PAGE_END--></div>
<!--SEL_START-->
<svg style="left:0;top:0" width="1920" height="1080" viewBox="0 0 1920 1080">
<rect x="937.5" y="305" width="516.5" height="517" fill="none" stroke="#6a3cd8" stroke-width="2"/>
<circle cx="937" cy="305" r="6.5" fill="#fff" stroke="#d9d9d9" stroke-width="0.6"/>
<circle cx="1454" cy="305" r="6.5" fill="#fff" stroke="#d9d9d9" stroke-width="0.6"/>
<circle cx="937" cy="822" r="6.5" fill="#fff" stroke="#d9d9d9" stroke-width="0.6"/>
<circle cx="1454" cy="822" r="6.5" fill="#fff" stroke="#d9d9d9" stroke-width="0.6"/>
<rect x="1186" y="301" width="20" height="8" rx="4" fill="#fff" stroke="#d9d9d9" stroke-width="0.6"/>
<rect x="1186" y="818" width="20" height="8" rx="4" fill="#fff" stroke="#d9d9d9" stroke-width="0.6"/>
<rect x="933" y="553" width="8" height="20" rx="4" fill="#fff" stroke="#d9d9d9" stroke-width="0.6"/>
<rect x="1450" y="553" width="8" height="20" rx="4" fill="#fff" stroke="#d9d9d9" stroke-width="0.6"/>
<circle cx="1196.4" cy="874" r="13" fill="#fff"/>
<path d="M1194.3 880.6A6.3 6.6 0 0 1 1193.6 867.6" stroke="#1a1c20" stroke-width="1.7" fill="none"/><path d="M1191.2 865.6L1196.2 867.4L1192.6 870.9Z" fill="#1a1c20"/>
<path d="M1198.5 867.4A6.3 6.6 0 0 1 1199.2 880.4" stroke="#1a1c20" stroke-width="1.7" fill="none"/><path d="M1201.6 882.4L1196.6 880.6L1200.2 877.1Z" fill="#1a1c20"/>
<filter id="sh1" x="-20%" y="-40%" width="140%" height="180%"><feDropShadow dx="0" dy="1" stdDeviation="1.5" flood-opacity="0.18"/></filter>
<rect x="1134" y="225" width="124" height="46" rx="4" fill="#fff" filter="url(#sh1)"/>
<g fill="none" stroke="#0e1318" stroke-width="1.9" stroke-linejoin="round"><path d="M1153 257H1149Q1147.5 257 1147.5 255.5V240Q1147.5 238.5 1149 238.5H1161Q1162.5 238.5 1162.5 240V242"/><rect x="1153" y="242.5" width="15" height="15.5" rx="1.8"/><path d="M1160.5 246.5V254M1156.8 250.2H1164.2"/></g>
<g fill="none" stroke="#0e1318" stroke-width="1.9"><path d="M1186 241.5H1206"/><path d="M1192 241V238.5Q1192 237 1193.5 237H1198.5Q1200 237 1200 238.5V241"/><path d="M1188.5 242L1190 256.5Q1190.2 258 1191.7 258H1200.3Q1201.8 258 1202 256.5L1203.5 242"/><path d="M1193.8 246V253.5M1198.2 246V253.5"/></g>
<circle cx="1227" cy="247.5" r="2.3" fill="#0e1318"/><circle cx="1235" cy="247.5" r="2.3" fill="#0e1318"/><circle cx="1243" cy="247.5" r="2.3" fill="#0e1318"/>
<filter id="sh2" x="-50%" y="-50%" width="200%" height="200%"><feDropShadow dx="0" dy="1" stdDeviation="2" flood-opacity="0.2"/></filter>
<circle cx="1551" cy="328" r="22" fill="#fff" filter="url(#sh2)"/>
<path d="M1553 318.8A10.3 8.3 0 0 0 1546.5 334.8L1548.6 338.2L1552 335.3A10.3 8.3 0 0 0 1561.3 327.3" stroke="#0e1318" stroke-width="1.7" fill="none" stroke-linejoin="round" stroke-linecap="round"/>
<path d="M1559.4 316.8V324.8M1555.4 320.8H1563.4" stroke="#0e1318" stroke-width="1.7" stroke-linecap="round"/>
</svg>
<!--SEL_END-->

<!-- page 45 -->
<div class="t" style="left:873px;top:923px;font-size:16px;color:#3b3d42;letter-spacing:0.42px"><span style="color:#0e1318;-webkit-text-stroke:0.5px #0e1318">Page 45 - </span><span style="color:#6b6e75">Add page title</span></div>
<div class="a" style="left:873px;top:950px;width:646px;height:17px;overflow:hidden;background:#1a1612"><!--P45_START-->
<svg style="left:0;top:0" width="646" height="17" viewBox="873 950 646 17">
<defs><linearGradient id="gold" x1="0" y1="0" x2="0" y2="1"><stop offset="0" stop-color="#b8942e"/><stop offset="0.45" stop-color="#dcbb5a"/><stop offset="1" stop-color="#a98526"/></linearGradient><linearGradient id="blk" x1="0" y1="0" x2="0" y2="1"><stop offset="0" stop-color="#0c0c0c"/><stop offset="0.5" stop-color="#2e2e2e"/><stop offset="1" stop-color="#141414"/></linearGradient><radialGradient id="gold2" cx="0.5" cy="0.3" r="0.7"><stop offset="0" stop-color="#e8d48a"/><stop offset="1" stop-color="#a88530"/></radialGradient><radialGradient id="blk2" cx="0.5" cy="0.3" r="0.7"><stop offset="0" stop-color="#3a3a3a"/><stop offset="1" stop-color="#0a0a0a"/></radialGradient></defs>
<rect x="873" y="950" width="646" height="17" fill="#151515"/>
<rect x="873" y="950" width="90" height="17" fill="url(#blk)"/>
<rect x="963" y="950" width="88" height="17" fill="url(#gold)"/>
<rect x="1051" y="950" width="46" height="17" fill="url(#blk)"/>
<rect x="1097" y="950" width="89" height="17" fill="url(#gold)"/>
<rect x="1186" y="950" width="88" height="17" fill="url(#gold)"/>
<rect x="1274" y="950" width="85" height="17" fill="url(#blk)"/>
<rect x="1359" y="950" width="82" height="17" fill="url(#gold)"/>
<rect x="1441" y="950" width="78" height="17" fill="url(#blk)"/>
<ellipse cx="955.0" cy="971" rx="25.0" ry="11" fill="url(#gold2)"/>
<ellipse cx="1034.5" cy="971" rx="22.5" ry="11" fill="url(#blk2)"/>
<ellipse cx="1100.5" cy="971" rx="29.5" ry="11" fill="url(#gold2)"/>
<ellipse cx="1193.5" cy="971" rx="22.5" ry="11" fill="url(#blk2)"/>
<ellipse cx="1318.0" cy="971" rx="27.0" ry="11" fill="url(#gold2)"/>
<ellipse cx="1515.0" cy="971" rx="15.0" ry="11" fill="url(#blk2)"/>
</svg>
<!--P45_END--></div>

<!-- ============ TASKBAR ============ -->
<div class="a" style="left:0;top:1034px;width:1920px;height:46px;background:#d9d9d9"></div>
<div class="a" style="left:56px;top:1036px;width:387px;height:44px;background:#f4f4f4"></div>
<div class="t" style="left:100.5px;top:1051px;font-size:17.5px;color:#2a2a2a">Type here to search</div>
<div class="t" style="left:541px;top:1000px;font-size:17px;color:#0e1318;-webkit-text-stroke:0.3px #0e1318">Notes</div>
<div class="t" style="left:1458px;top:1000.5px;font-size:16.5px;color:#0e1318;-webkit-text-stroke:0.3px #0e1318">53%</div>
<!--BOTTOM_START-->
<svg style="left:0;top:0" width="1920" height="1080" viewBox="0 0 1920 1080">
<path d="M502 972V980L497.5 976Z" fill="#a0a0a4"/><path d="M1889 972V980L1893.5 976Z" fill="#a0a0a4"/>
<rect x="1901" y="967" width="19" height="18" fill="#e4e4e6"/>
<path d="M1160 986Q1172 986 1178 978Q1183 972 1192 972H1237Q1246 972 1251 978Q1257 986 1270 986Z" fill="#fff"/>
<path d="M1210 986L1214 982L1218 986" stroke="#0e1318" stroke-width="1.6" fill="none" stroke-linecap="round"/>
<g stroke="#0e1318" stroke-width="1.8" fill="none" stroke-linecap="round"><path d="M509 1001H523M509 1006H519M509 1011H515M509 1016H513"/><path d="M529 1000.5L531.5 1003L522 1012.5L518.5 1013.5L519.5 1010Z" stroke-linejoin="round"/></g>
<rect x="1525" y="1008" width="96" height="2" fill="#8e8f95"/><rect x="1621" y="1008" width="130" height="1.6" fill="#d7d8dc"/>
<circle cx="1620.5" cy="1009" r="6.8" fill="#0e1318"/>
<g stroke="#0e1318" stroke-width="1.7" fill="none"><rect x="1780.5" y="998" width="21" height="21" rx="1.5"/><path d="M1784 995H1803.5Q1805 995 1805 996.5V1015"/></g>
<text x="1783.5" y="1014" font-family="Liberation Sans" font-size="11" font-weight="700" fill="#0e1318">62</text>
<g stroke="#0e1318" stroke-width="1.8" fill="none" stroke-linecap="round" stroke-linejoin="round"><path d="M1840 1007L1846.5 1000.5M1841.5 1000H1847V1005.5"/><path d="M1836 1011L1829.5 1017.5M1829 1012V1018H1834.5"/></g>
<rect x="1865" y="995" width="1" height="27" fill="#e2e3e6"/>
<circle cx="1892.5" cy="1009" r="11" stroke="#0e1318" stroke-width="1.8" fill="none"/>
<path d="M1888.5 1005.5A4 4 0 1 1 1894 1009Q1892.5 1009.8 1892.5 1011.5V1012" stroke="#0e1318" stroke-width="1.8" fill="none" stroke-linecap="round"/><circle cx="1892.5" cy="1015.3" r="1.2" fill="#0e1318"/>
<rect x="0" y="1030" width="1920" height="4" fill="#050505"/>
<g fill="#1a1a1a"><path d="M18 1050.5L25.5 1049.5V1056.5H18Z"/><path d="M27 1049.3L36.5 1048V1056.5H27Z"/><path d="M18 1058H25.5V1065L18 1064Z"/><path d="M27 1058H36.5V1066.5L27 1065.2Z"/></g>
<g stroke="#1a1a1a" stroke-width="1.6" fill="none"><circle cx="81" cy="1053" r="6"/><path d="M76.5 1057.5L69.5 1064.5" stroke-linecap="round"/></g>
<circle cx="472" cy="1057" r="8.2" stroke="#111" stroke-width="2.4" fill="none"/>
<g><path d="M517 1047H526L528 1049H543V1066H517Z" fill="#e9b43a"/><path d="M517 1052H543V1066H517Z" fill="#f6cf55"/><path d="M522 1057H538V1066H534V1061H526V1066H522Z" fill="#2a7bd6"/></g>
<rect x="508" y="1077" width="45" height="3" fill="#e38a2a"/>
<rect x="573.7" y="1043.7" width="26" height="26" rx="7" fill="#3d8bf0"/><path d="M579 1052H589Q591 1052 591 1054V1061H581Q579 1061 579 1059Z" fill="#fff"/><path d="M592 1055L596 1052V1061L592 1058Z" fill="#fff"/>
<circle cx="643" cy="1056.7" r="13" fill="#dd4b3e"/>
<path d="M643 1056.7L631.74 1063.2A13 13 0 0 1 643 1043.7Z" fill="#dd4b3e"/>
<path d="M643 1056.7L654.26 1050.2A13 13 0 0 1 643 1069.7Z" fill="#f7c531"/>
<path d="M643 1056.7L643 1069.7A13 13 0 0 1 631.74 1063.2Z" fill="#23a455"/>
<path d="M643 1056.7L631.74 1063.2A13 13 0 0 1 631.74 1050.2Z" fill="#23a455"/>
<circle cx="643" cy="1056.7" r="6" fill="#fff"/><circle cx="643" cy="1056.7" r="4.6" fill="#3c7ee8"/>
<circle cx="700.7" cy="1056.7" r="13" fill="#1b3a6b"/><circle cx="705" cy="1053" r="5" fill="none" stroke="#fff" stroke-width="2"/><path d="M688 1060L699 1064" stroke="#fff" stroke-width="3" stroke-linecap="round"/><circle cx="697" cy="1062" r="2.5" fill="#fff"/>
<circle cx="756.7" cy="1056.7" r="11" fill="#f56c2d"/><circle cx="756.7" cy="1056.7" r="4.5" fill="#e8e8e8"/><path d="M757 1042L760 1046" stroke="#f56c2d" stroke-width="3"/>
<circle cx="814" cy="1056.7" r="13" fill="#1f8ad8"/><path d="M801 1058Q803 1045 816 1044Q826 1045 827 1054Q820 1050 812 1054Q808 1058 812 1064Q806 1066 801 1058Z" fill="#4fd06a" opacity="0.85"/><circle cx="816" cy="1060" r="4" fill="#d9d9d9"/>
<circle cx="870.7" cy="1056.7" r="13" fill="#0a0a0a"/><path d="M872 1048V1061A3.5 3.5 0 1 1 868.5 1057.5" stroke="#fff" stroke-width="2.3" fill="none"/><path d="M872 1048Q873 1052 877.5 1052.5" stroke="#fff" stroke-width="2.3" fill="none"/>
<circle cx="927.7" cy="1056.7" r="13" fill="#5a5450"/><path d="M923 1048V1064Q933 1064 933 1058Q933 1053 926 1053" stroke="#f08a1a" stroke-width="2.6" fill="none"/>
<circle cx="984" cy="1056.7" r="13" fill="#1ec45c"/><g stroke="#111" stroke-width="2" fill="none" stroke-linecap="round"><path d="M977 1052Q985 1049 992 1053"/><path d="M978 1056.5Q985 1054 991 1057.5"/><path d="M979 1061Q985 1059 990 1062"/></g>
<rect x="1013" y="1034" width="52" height="46" fill="#e9e9e9"/>
<circle cx="1040.7" cy="1056.7" r="13" fill="#dd4b3e"/>
<path d="M1040.7 1056.7L1029.44 1063.2A13 13 0 0 1 1040.7 1043.7Z" fill="#dd4b3e"/>
<path d="M1040.7 1056.7L1051.96 1050.2A13 13 0 0 1 1040.7 1069.7Z" fill="#f7c531"/>
<path d="M1040.7 1056.7L1040.7 1069.7A13 13 0 0 1 1029.44 1063.2Z" fill="#23a455"/>
<path d="M1040.7 1056.7L1029.44 1063.2A13 13 0 0 1 1029.44 1050.2Z" fill="#23a455"/>
<circle cx="1040.7" cy="1056.7" r="6" fill="#fff"/><circle cx="1040.7" cy="1056.7" r="4.6" fill="#3c7ee8"/>
<circle cx="1046" cy="1064" r="7" fill="#9a8f86"/><circle cx="1046" cy="1062" r="3" fill="#d9c5b0"/>
<rect x="1013" y="1077" width="52" height="3" fill="#e38a2a"/><rect x="1075" y="1077" width="46" height="3" fill="#e38a2a"/>
<circle cx="1097.7" cy="1056.7" r="13" fill="#1a1a1a"/><circle cx="1097.7" cy="1056.7" r="11" fill="none" stroke="#555" stroke-width="1"/><circle cx="1097.7" cy="1050" r="4" fill="#e8e8e8"/><circle cx="1092" cy="1060" r="4" fill="#bdbdbd"/><circle cx="1103.5" cy="1060" r="4" fill="#d0d0d0"/>
</svg>
<!--BOTTOM_END-->
</body></html>
